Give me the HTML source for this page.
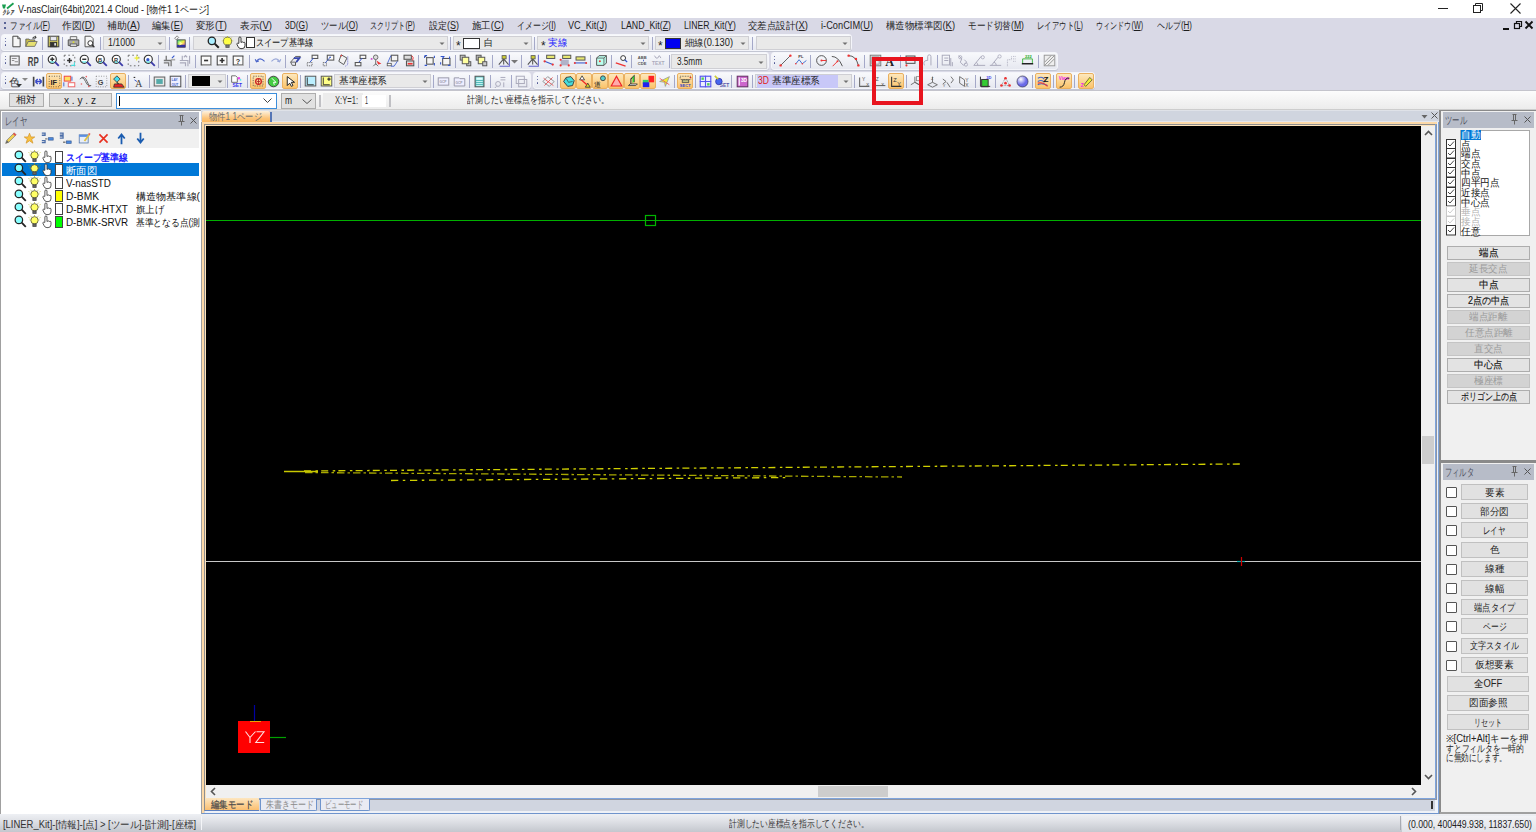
<!DOCTYPE html>
<html><head><meta charset="utf-8"><style>*{box-sizing:border-box;margin:0;padding:0}
html,body{width:1536px;height:832px;overflow:hidden;background:#d9d9e6;font-family:"Liberation Sans",sans-serif;font-size:10px;color:#000}
.a{position:absolute;display:block}
.t{white-space:nowrap;transform-origin:0 50%}
svg.a{overflow:visible}
</style></head><body>
<div class="a" style="left:0px;top:0px;width:1536px;height:18px;background:#fff"></div>
<svg class="a" style="left:0px;top:0px;" width="16" height="17" viewBox="0 0 16 17"><path d="M2 4.5h4l-1 4h-2z" fill="#1a9e50"/><path d="M7 8.5L13.5 3.2" stroke="#1a9e50" stroke-width="1.8"/><text x="1.5" y="15" font-size="7" fill="#555" font-weight="bold" font-family="Liberation Sans" textLength="12" lengthAdjust="spacingAndGlyphs" style="font-style:italic">ｸﾚｱ</text></svg>
<span id="t1" class="a t" style="transform:scaleX(0.900);left:18px;top:2.5px;height:14px;line-height:14px;font-size:10px;color:#1a1a1a;">V-nasClair(64bit)2021.4 Cloud - [物件1 1ページ]</span>
<div class="a" style="left:1438px;top:8px;width:10px;height:1px;background:#222"></div>
<svg class="a" style="left:1473px;top:3px;" width="11" height="11" viewBox="0 0 11 11"><rect x="0.5" y="2.5" width="7" height="7" fill="none" stroke="#222"/><path d="M2.5 2.5v-2h7v7h-2" fill="none" stroke="#222"/></svg>
<svg class="a" style="left:1510px;top:3px;" width="11" height="11" viewBox="0 0 11 11"><path d="M0.5 0.5l10 10M10.5 0.5l-10 10" stroke="#222" stroke-width="1.1"/></svg>
<div class="a" style="left:0px;top:18px;width:1536px;height:72px;background:#d9d9e6"></div>
<div class="a" style="left:4px;top:22px;width:2px;height:2px;background:#5a6396"></div>
<div class="a" style="left:4px;top:27px;width:2px;height:2px;background:#5a6396"></div>
<span id="t2" class="a t" style="transform:scaleX(0.758);left:10px;top:19.0px;height:14px;line-height:14px;font-size:10px;color:#1e1e1e;">ファイル(<u>F</u>)</span>
<span id="t3" class="a t" style="transform:scaleX(0.973);left:62px;top:19.0px;height:14px;line-height:14px;font-size:10px;color:#1e1e1e;">作図(<u>D</u>)</span>
<span id="t4" class="a t" style="transform:scaleX(0.989);left:107px;top:19.0px;height:14px;line-height:14px;font-size:10px;color:#1e1e1e;">補助(<u>A</u>)</span>
<span id="t5" class="a t" style="transform:scaleX(0.929);left:152px;top:19.0px;height:14px;line-height:14px;font-size:10px;color:#1e1e1e;">編集(<u>E</u>)</span>
<span id="t6" class="a t" style="transform:scaleX(0.945);left:196px;top:19.0px;height:14px;line-height:14px;font-size:10px;color:#1e1e1e;">変形(<u>T</u>)</span>
<span id="t7" class="a t" style="transform:scaleX(0.959);left:240px;top:19.0px;height:14px;line-height:14px;font-size:10px;color:#1e1e1e;">表示(<u>V</u>)</span>
<span id="t8" class="a t" style="transform:scaleX(0.844);left:285px;top:19.0px;height:14px;line-height:14px;font-size:10px;color:#1e1e1e;">3D(<u>G</u>)</span>
<span id="t9" class="a t" style="transform:scaleX(0.832);left:321px;top:19.0px;height:14px;line-height:14px;font-size:10px;color:#1e1e1e;">ツール(<u>O</u>)</span>
<span id="t10" class="a t" style="transform:scaleX(0.710);left:370px;top:19.0px;height:14px;line-height:14px;font-size:10px;color:#1e1e1e;">スクリプト(<u>P</u>)</span>
<span id="t11" class="a t" style="transform:scaleX(0.899);left:429px;top:19.0px;height:14px;line-height:14px;font-size:10px;color:#1e1e1e;">設定(<u>S</u>)</span>
<span id="t12" class="a t" style="transform:scaleX(0.943);left:472px;top:19.0px;height:14px;line-height:14px;font-size:10px;color:#1e1e1e;">施工(<u>C</u>)</span>
<span id="t13" class="a t" style="transform:scaleX(0.788);left:517px;top:19.0px;height:14px;line-height:14px;font-size:10px;color:#1e1e1e;">イメージ(<u>I</u>)</span>
<span id="t14" class="a t" style="transform:scaleX(0.911);left:568px;top:19.0px;height:14px;line-height:14px;font-size:10px;color:#1e1e1e;">VC_Kit(<u>J</u>)</span>
<span id="t15" class="a t" style="transform:scaleX(0.882);left:621px;top:19.0px;height:14px;line-height:14px;font-size:10px;color:#1e1e1e;">LAND_Kit(<u>Z</u>)</span>
<span id="t16" class="a t" style="transform:scaleX(0.866);left:684px;top:19.0px;height:14px;line-height:14px;font-size:10px;color:#1e1e1e;">LINER_Kit(<u>Y</u>)</span>
<span id="t17" class="a t" style="transform:scaleX(0.947);left:748px;top:19.0px;height:14px;line-height:14px;font-size:10px;color:#1e1e1e;">交差点設計(<u>X</u>)</span>
<span id="t18" class="a t" style="transform:scaleX(0.926);left:821px;top:19.0px;height:14px;line-height:14px;font-size:10px;color:#1e1e1e;">i-ConCIM(<u>U</u>)</span>
<span id="t19" class="a t" style="transform:scaleX(0.941);left:886px;top:19.0px;height:14px;line-height:14px;font-size:10px;color:#1e1e1e;">構造物標準図(<u>K</u>)</span>
<span id="t20" class="a t" style="transform:scaleX(0.861);left:968px;top:19.0px;height:14px;line-height:14px;font-size:10px;color:#1e1e1e;">モード切替(<u>M</u>)</span>
<span id="t21" class="a t" style="transform:scaleX(0.739);left:1037px;top:19.0px;height:14px;line-height:14px;font-size:10px;color:#1e1e1e;">レイアウト(<u>L</u>)</span>
<span id="t22" class="a t" style="transform:scaleX(0.711);left:1096px;top:19.0px;height:14px;line-height:14px;font-size:10px;color:#1e1e1e;">ウィンドウ(<u>W</u>)</span>
<span id="t23" class="a t" style="transform:scaleX(0.797);left:1157px;top:19.0px;height:14px;line-height:14px;font-size:10px;color:#1e1e1e;">ヘルプ(<u>H</u>)</span>
<div class="a" style="left:1503px;top:28px;width:6px;height:2px;background:#111"></div>
<svg class="a" style="left:1514px;top:21px;" width="8" height="8" viewBox="0 0 8 8"><rect x="0.5" y="2.5" width="5" height="5" fill="none" stroke="#111" stroke-width="1.2"/><path d="M2.5 2.5v-2h5v5h-2" fill="none" stroke="#111" stroke-width="1.2"/></svg>
<svg class="a" style="left:1525px;top:21px;" width="8" height="8" viewBox="0 0 8 8"><path d="M0.5 0.5l7 7M7.5 0.5l-7 7" stroke="#111" stroke-width="1.8"/></svg>
<div class="a" style="left:1px;top:34px;width:851px;height:17px;border-radius:3px;background:linear-gradient(#f8f9fc,#e6e8f0);border:1px solid #f4f5fa;box-shadow:0 1px 0 #c3c6d3"></div>
<div class="a" style="left:1px;top:52px;width:768px;height:18px;border-radius:3px;background:linear-gradient(#f8f9fc,#e6e8f0);border:1px solid #f4f5fa;box-shadow:0 1px 0 #c3c6d3"></div>
<div class="a" style="left:771px;top:52px;width:287px;height:18px;border-radius:3px;background:linear-gradient(#f8f9fc,#e6e8f0);border:1px solid #f4f5fa;box-shadow:0 1px 0 #c3c6d3"></div>
<div class="a" style="left:1px;top:72px;width:530px;height:17px;border-radius:3px;background:linear-gradient(#f8f9fc,#e6e8f0);border:1px solid #f4f5fa;box-shadow:0 1px 0 #c3c6d3"></div>
<div class="a" style="left:533px;top:72px;width:562px;height:17px;border-radius:3px;background:linear-gradient(#f8f9fc,#e6e8f0);border:1px solid #f4f5fa;box-shadow:0 1px 0 #c3c6d3"></div>
<div class="a" style="left:4.5px;top:37.5px;width:1.6px;height:1.6px;background:#4a5290;border-radius:1px"></div>
<div class="a" style="left:4.5px;top:40.9px;width:1.6px;height:1.6px;background:#4a5290;border-radius:1px"></div>
<div class="a" style="left:4.5px;top:44.3px;width:1.6px;height:1.6px;background:#4a5290;border-radius:1px"></div>
<div class="a" style="left:4.5px;top:55.5px;width:1.6px;height:1.6px;background:#4a5290;border-radius:1px"></div>
<div class="a" style="left:4.5px;top:58.9px;width:1.6px;height:1.6px;background:#4a5290;border-radius:1px"></div>
<div class="a" style="left:4.5px;top:62.3px;width:1.6px;height:1.6px;background:#4a5290;border-radius:1px"></div>
<div class="a" style="left:4.5px;top:75.5px;width:1.6px;height:1.6px;background:#4a5290;border-radius:1px"></div>
<div class="a" style="left:4.5px;top:78.9px;width:1.6px;height:1.6px;background:#4a5290;border-radius:1px"></div>
<div class="a" style="left:4.5px;top:82.3px;width:1.6px;height:1.6px;background:#4a5290;border-radius:1px"></div>
<div class="a" style="left:773.5px;top:55.5px;width:1.6px;height:1.6px;background:#4a5290;border-radius:1px"></div>
<div class="a" style="left:773.5px;top:58.9px;width:1.6px;height:1.6px;background:#4a5290;border-radius:1px"></div>
<div class="a" style="left:773.5px;top:62.3px;width:1.6px;height:1.6px;background:#4a5290;border-radius:1px"></div>
<div class="a" style="left:536.5px;top:75.5px;width:1.6px;height:1.6px;background:#4a5290;border-radius:1px"></div>
<div class="a" style="left:536.5px;top:78.9px;width:1.6px;height:1.6px;background:#4a5290;border-radius:1px"></div>
<div class="a" style="left:536.5px;top:82.3px;width:1.6px;height:1.6px;background:#4a5290;border-radius:1px"></div>
<div class="a" style="left:42px;top:37px;width:1.2px;height:13px;background:#a4a8c8"></div>
<div class="a" style="left:62px;top:37px;width:1.2px;height:13px;background:#a4a8c8"></div>
<div class="a" style="left:100px;top:37px;width:1.2px;height:13px;background:#a4a8c8"></div>
<div class="a" style="left:169px;top:37px;width:1.2px;height:13px;background:#a4a8c8"></div>
<div class="a" style="left:189px;top:37px;width:1.2px;height:13px;background:#a4a8c8"></div>
<div class="a" style="left:450px;top:37px;width:1.2px;height:13px;background:#a4a8c8"></div>
<div class="a" style="left:534px;top:37px;width:1.2px;height:13px;background:#a4a8c8"></div>
<div class="a" style="left:652px;top:37px;width:1.2px;height:13px;background:#a4a8c8"></div>
<div class="a" style="left:752px;top:37px;width:1.2px;height:13px;background:#a4a8c8"></div>
<div class="a" style="left:42px;top:55px;width:1.2px;height:13px;background:#a4a8c8"></div>
<div class="a" style="left:158px;top:55px;width:1.2px;height:13px;background:#a4a8c8"></div>
<div class="a" style="left:195px;top:55px;width:1.2px;height:13px;background:#a4a8c8"></div>
<div class="a" style="left:249px;top:55px;width:1.2px;height:13px;background:#a4a8c8"></div>
<div class="a" style="left:285px;top:55px;width:1.2px;height:13px;background:#a4a8c8"></div>
<div class="a" style="left:418px;top:55px;width:1.2px;height:13px;background:#a4a8c8"></div>
<div class="a" style="left:455px;top:55px;width:1.2px;height:13px;background:#a4a8c8"></div>
<div class="a" style="left:492px;top:55px;width:1.2px;height:13px;background:#a4a8c8"></div>
<div class="a" style="left:521px;top:55px;width:1.2px;height:13px;background:#a4a8c8"></div>
<div class="a" style="left:590px;top:55px;width:1.2px;height:13px;background:#a4a8c8"></div>
<div class="a" style="left:611px;top:55px;width:1.2px;height:13px;background:#a4a8c8"></div>
<div class="a" style="left:631px;top:55px;width:1.2px;height:13px;background:#a4a8c8"></div>
<div class="a" style="left:669px;top:55px;width:1.2px;height:13px;background:#a4a8c8"></div>
<div class="a" style="left:810px;top:55px;width:1.2px;height:13px;background:#a4a8c8"></div>
<div class="a" style="left:864px;top:55px;width:1.2px;height:13px;background:#a4a8c8"></div>
<div class="a" style="left:900px;top:55px;width:1.2px;height:13px;background:#a4a8c8"></div>
<div class="a" style="left:937px;top:55px;width:1.2px;height:13px;background:#a4a8c8"></div>
<div class="a" style="left:1038px;top:55px;width:1.2px;height:13px;background:#a4a8c8"></div>
<div class="a" style="left:128px;top:75px;width:1.2px;height:13px;background:#a4a8c8"></div>
<div class="a" style="left:149px;top:75px;width:1.2px;height:13px;background:#a4a8c8"></div>
<div class="a" style="left:185px;top:75px;width:1.2px;height:13px;background:#a4a8c8"></div>
<div class="a" style="left:227px;top:75px;width:1.2px;height:13px;background:#a4a8c8"></div>
<div class="a" style="left:247px;top:75px;width:1.2px;height:13px;background:#a4a8c8"></div>
<div class="a" style="left:300px;top:75px;width:1.2px;height:13px;background:#a4a8c8"></div>
<div class="a" style="left:433px;top:75px;width:1.2px;height:13px;background:#a4a8c8"></div>
<div class="a" style="left:469px;top:75px;width:1.2px;height:13px;background:#a4a8c8"></div>
<div class="a" style="left:490px;top:75px;width:1.2px;height:13px;background:#a4a8c8"></div>
<div class="a" style="left:511px;top:75px;width:1.2px;height:13px;background:#a4a8c8"></div>
<div class="a" style="left:557px;top:75px;width:1.2px;height:13px;background:#a4a8c8"></div>
<div class="a" style="left:674px;top:75px;width:1.2px;height:13px;background:#a4a8c8"></div>
<div class="a" style="left:695px;top:75px;width:1.2px;height:13px;background:#a4a8c8"></div>
<div class="a" style="left:731px;top:75px;width:1.2px;height:13px;background:#a4a8c8"></div>
<div class="a" style="left:752px;top:75px;width:1.2px;height:13px;background:#a4a8c8"></div>
<div class="a" style="left:854px;top:75px;width:1.2px;height:13px;background:#a4a8c8"></div>
<div class="a" style="left:906px;top:75px;width:1.2px;height:13px;background:#a4a8c8"></div>
<div class="a" style="left:975px;top:75px;width:1.2px;height:13px;background:#a4a8c8"></div>
<div class="a" style="left:995px;top:75px;width:1.2px;height:13px;background:#a4a8c8"></div>
<div class="a" style="left:1032px;top:75px;width:1.2px;height:13px;background:#a4a8c8"></div>
<div class="a" style="left:1053px;top:75px;width:1.2px;height:13px;background:#a4a8c8"></div>
<div class="a" style="left:1074px;top:75px;width:1.2px;height:13px;background:#a4a8c8"></div>
<div class="a" style="left:103px;top:36px;width:63px;height:14px;background:#e9e9e9;border:1px solid #cfcfd4"></div>
<svg class="a" style="left:157px;top:42.0px;" width="6" height="4" viewBox="0 0 6 4"><path d="M0.5 0.5h5l-2.5 2.5z" fill="#707070"/></svg>
<span id="t24" class="a t" style="transform:scaleX(0.883);left:108px;top:36.0px;height:14px;line-height:14px;font-size:10px;color:#222;">1/1000</span>
<div class="a" style="left:193px;top:36px;width:255px;height:14px;background:#e9e9e9;border:1px solid #cfcfd4"></div>
<svg class="a" style="left:439px;top:42.0px;" width="6" height="4" viewBox="0 0 6 4"><path d="M0.5 0.5h5l-2.5 2.5z" fill="#707070"/></svg>
<div class="a" style="left:453px;top:36px;width:79px;height:14px;background:#e9e9e9;border:1px solid #cfcfd4"></div>
<svg class="a" style="left:523px;top:42.0px;" width="6" height="4" viewBox="0 0 6 4"><path d="M0.5 0.5h5l-2.5 2.5z" fill="#707070"/></svg>
<span id="t25" class="a t" style="left:456px;top:38.5px;height:14px;line-height:14px;font-size:12px;color:#222;">*</span>
<div class="a" style="left:463px;top:38px;width:17px;height:11px;background:#fff;border:1px solid #333"></div>
<span id="t26" class="a t" style="transform:scaleX(0.900);left:484px;top:36.0px;height:14px;line-height:14px;font-size:10px;color:#222;">白</span>
<div class="a" style="left:537px;top:36px;width:112px;height:14px;background:#e9e9e9;border:1px solid #cfcfd4"></div>
<svg class="a" style="left:640px;top:42.0px;" width="6" height="4" viewBox="0 0 6 4"><path d="M0.5 0.5h5l-2.5 2.5z" fill="#707070"/></svg>
<span id="t27" class="a t" style="left:541px;top:38.5px;height:14px;line-height:14px;font-size:12px;color:#222;">*</span>
<span id="t28" class="a t" style="transform:scaleX(0.950);left:548px;top:36.0px;height:14px;line-height:14px;font-size:10px;color:#2020ff;">実線</span>
<div class="a" style="left:655px;top:36px;width:94px;height:14px;background:#e9e9e9;border:1px solid #cfcfd4"></div>
<svg class="a" style="left:740px;top:42.0px;" width="6" height="4" viewBox="0 0 6 4"><path d="M0.5 0.5h5l-2.5 2.5z" fill="#707070"/></svg>
<span id="t29" class="a t" style="left:658px;top:38.5px;height:14px;line-height:14px;font-size:12px;color:#222;">*</span>
<div class="a" style="left:665px;top:38px;width:16px;height:11px;background:#0000f0;border:1px solid #333"></div>
<span id="t30" class="a t" style="transform:scaleX(0.929);left:685px;top:36.0px;height:14px;line-height:14px;font-size:10px;color:#222;">細線(0.130)</span>
<div class="a" style="left:756px;top:36px;width:95px;height:14px;background:#e9e9e9;border:1px solid #cfcfd4"></div>
<svg class="a" style="left:842px;top:42.0px;" width="6" height="4" viewBox="0 0 6 4"><path d="M0.5 0.5h5l-2.5 2.5z" fill="#707070"/></svg>
<span id="t31" class="a t" style="transform:scaleX(0.814);left:256px;top:35.5px;height:14px;line-height:14px;font-size:10px;color:#111;">スイープ基準線</span>
<div class="a" style="left:671px;top:54px;width:96px;height:15px;background:#e9e9e9;border:1px solid #cfcfd4"></div>
<svg class="a" style="left:758px;top:60.5px;" width="6" height="4" viewBox="0 0 6 4"><path d="M0.5 0.5h5l-2.5 2.5z" fill="#707070"/></svg>
<span id="t32" class="a t" style="transform:scaleX(0.818);left:677px;top:55.0px;height:14px;line-height:14px;font-size:10px;color:#222;">3.5mm</span>
<div class="a" style="left:188px;top:74px;width:38px;height:14px;background:#e9e9e9;border:1px solid #cfcfd4"></div>
<svg class="a" style="left:217px;top:80.0px;" width="6" height="4" viewBox="0 0 6 4"><path d="M0.5 0.5h5l-2.5 2.5z" fill="#707070"/></svg>
<div class="a" style="left:192px;top:76px;width:18px;height:10px;background:#000"></div>
<div class="a" style="left:334px;top:74px;width:97px;height:14px;background:#e9e9e9;border:1px solid #cfcfd4"></div>
<svg class="a" style="left:422px;top:80.0px;" width="6" height="4" viewBox="0 0 6 4"><path d="M0.5 0.5h5l-2.5 2.5z" fill="#707070"/></svg>
<span id="t33" class="a t" style="transform:scaleX(0.960);left:339px;top:74.0px;height:14px;line-height:14px;font-size:10px;color:#222;">基準座標系</span>
<div class="a" style="left:755px;top:74px;width:97px;height:14px;background:#e9e9e9;border:1px solid #cfcfd4"></div>
<svg class="a" style="left:843px;top:80.0px;" width="6" height="4" viewBox="0 0 6 4"><path d="M0.5 0.5h5l-2.5 2.5z" fill="#707070"/></svg>
<div class="a" style="left:757px;top:75px;width:81px;height:13px;background:#c8c8f8"></div>
<span id="t34" class="a t" style="transform:scaleX(0.860);left:758px;top:74.0px;height:14px;line-height:14px;font-size:10px;color:#e02020;">3D</span>
<span id="t35" class="a t" style="transform:scaleX(0.960);left:772px;top:74.0px;height:14px;line-height:14px;font-size:10px;color:#222;">基準座標系</span>
<div class="a" style="left:0px;top:90px;width:1536px;height:19px;background:linear-gradient(#fdfdfd,#ececec)"></div>
<div class="a" style="left:0px;top:90px;width:1536px;height:1px;background:#c4c4cc"></div>
<div class="a" style="left:0px;top:109px;width:1536px;height:1px;background:#cdcdcd"></div>
<div class="a" style="left:9px;top:93px;width:35px;height:14px;background:#e1e1e1;border:1px solid #adadad"></div>
<span id="t36" class="a t" style="transform:scaleX(1.000);left:16px;top:92.8px;height:14px;line-height:14px;font-size:10px;color:#222;">相対</span>
<div class="a" style="left:49px;top:93px;width:63px;height:14px;background:#e1e1e1;border:1px solid #adadad"></div>
<span id="t37" class="a t" style="transform:scaleX(1.010);left:64px;top:93.5px;height:14px;line-height:14px;font-size:10px;color:#222;">x . y . z</span>
<div class="a" style="left:116px;top:93px;width:161px;height:16px;background:#fff;border:1px solid #3d8edb"></div>
<div class="a" style="left:119px;top:96px;width:1px;height:10px;background:#000"></div>
<svg class="a" style="left:263px;top:98px;" width="9" height="5" viewBox="0 0 9 5"><path d="M0.5 0.5l4 4 4-4" stroke="#444" fill="none"/></svg>
<div class="a" style="left:281px;top:93px;width:35px;height:16px;background:#e1e1e1;border:1px solid #adadad"></div>
<span id="t38" class="a t" style="transform:scaleX(0.839);left:284.5px;top:94.0px;height:14px;line-height:14px;font-size:10px;color:#222;">m</span>
<svg class="a" style="left:302px;top:99px;" width="10" height="5" viewBox="0 0 10 5"><path d="M0.5 0.5l4.5 4 4.5-4" stroke="#555" fill="none" stroke-width="1"/></svg>
<div class="a" style="left:319px;top:95px;width:2px;height:12px;background:#c0c0c4"></div>
<div class="a" style="left:389px;top:95px;width:2px;height:12px;background:#c0c0c4"></div>
<div class="a" style="left:323px;top:93px;width:40px;height:15px;background:#ececec"></div>
<div class="a" style="left:362px;top:95px;width:24px;height:12px;background:#fff"></div>
<span id="t39" class="a t" style="transform:scaleX(0.759);left:335px;top:94.0px;height:14px;line-height:14px;font-size:10px;color:#333;">X:Y=1:</span>
<span id="t40" class="a t" style="transform:scaleX(0.539);left:365px;top:94.0px;height:14px;line-height:14px;font-size:10px;color:#333;">1</span>
<span id="t41" class="a t" style="transform:scaleX(0.789);left:467px;top:92.6px;height:14px;line-height:14px;font-size:10px;color:#222;">計測したい座標点を指示してください。</span>
<div class="a" style="left:0px;top:110px;width:1536px;height:705px;background:#d0d4de"></div>
<div class="a" style="left:0px;top:110px;width:202px;height:705px;background:#fff;border:1px solid #a0a0a0"></div>
<div class="a" style="left:2px;top:112px;width:197px;height:17px;background:#b7bcc8"></div>
<span id="t42" class="a t" style="transform:scaleX(0.667);left:4.5px;top:113.5px;height:14px;line-height:14px;font-size:10.5px;color:#4f535f;">レイヤ</span>
<svg class="a" style="left:178px;top:115px;" width="7" height="11" viewBox="0 0 7 11"><path d="M1.5 0.5h4M2.5 0.5v6M4.5 0.5v6M0.5 6.5h6M3.5 6.5v4" stroke="#666" fill="none"/></svg>
<svg class="a" style="left:190px;top:117px;" width="7" height="7" viewBox="0 0 7 7"><path d="M0.5 0.5l6 6M6.5 0.5l-6 6" stroke="#555" stroke-width="1"/></svg>
<div class="a" style="left:2px;top:129px;width:197px;height:19px;background:#f0f0f0"></div>
<div class="a" style="left:2px;top:163px;width:197px;height:13px;background:#0078d7"></div>
<div class="a" style="left:55px;top:151px;width:8px;height:12px;background:#fff;border:1px solid #444"></div>
<span id="t43" class="a t" style="transform:scaleX(0.886);left:66px;top:150.5px;height:14px;line-height:14px;font-size:10px;color:#2222ff;font-weight:bold;">スイープ基準線</span>
<div class="a" style="left:55px;top:164px;width:8px;height:12px;background:#fff;border:1px solid #444"></div>
<span id="t44" class="a t" style="transform:scaleX(1.033);left:66px;top:163.5px;height:14px;line-height:14px;font-size:10px;color:#fff;">断面図</span>
<div class="a" style="left:55px;top:177px;width:8px;height:12px;background:#fff;border:1px solid #444"></div>
<span id="t45" class="a t" style="transform:scaleX(0.987);left:66px;top:176.5px;height:14px;line-height:14px;font-size:10px;color:#111;">V-nasSTD</span>
<div class="a" style="left:55px;top:190px;width:8px;height:12px;background:#ffff00;border:1px solid #444"></div>
<span id="t46" class="a t" style="transform:scaleX(1.024);left:66px;top:189.5px;height:14px;line-height:14px;font-size:10px;color:#111;">D-BMK</span>
<span id="t47" class="a t" style="transform:scaleX(1.010);left:136px;top:189.5px;height:14px;line-height:14px;font-size:10px;color:#111;">構造物基準線(</span>
<div class="a" style="left:55px;top:203px;width:8px;height:12px;background:#fff;border:1px solid #444"></div>
<span id="t48" class="a t" style="transform:scaleX(1.005);left:66px;top:202.5px;height:14px;line-height:14px;font-size:10px;color:#111;">D-BMK-HTXT</span>
<span id="t49" class="a t" style="transform:scaleX(0.933);left:136px;top:202.5px;height:14px;line-height:14px;font-size:10px;color:#111;">旗上げ</span>
<div class="a" style="left:55px;top:216px;width:8px;height:12px;background:#00ff00;border:1px solid #444"></div>
<span id="t50" class="a t" style="transform:scaleX(0.982);left:66px;top:215.5px;height:14px;line-height:14px;font-size:10px;color:#111;">D-BMK-SRVR</span>
<span id="t51" class="a t" style="transform:scaleX(0.873);left:136px;top:215.5px;height:14px;line-height:14px;font-size:10px;color:#111;">基準となる点(測</span>
<div class="a" style="left:199px;top:148px;width:1px;height:13px;background:#fff"></div>
<div class="a" style="left:201px;top:110px;width:1239px;height:12px;background:#d0d5df"></div>
<div class="a" style="left:201px;top:110px;width:1239px;height:1px;background:#dfe2e8"></div>
<div class="a" style="left:201px;top:121px;width:1239px;height:1px;background:#e3e6ee"></div>
<div class="a" style="left:202px;top:111px;width:68px;height:12px;background:linear-gradient(#fdf1de,#fcc47a 60%,#fbb55a);border-radius:2px 2px 0 0"></div>
<span id="t52" class="a t" style="transform:scaleX(0.829);left:209px;top:109.6px;height:14px;line-height:14px;font-size:10px;color:#707070;">物件1 1ページ</span>
<div class="a" style="left:270px;top:112px;width:1.5px;height:10px;background:#5575b5"></div>
<svg class="a" style="left:1421px;top:115px;" width="7" height="4" viewBox="0 0 7 4"><path d="M0.5 0h6l-3 3.5z" fill="#666"/></svg>
<svg class="a" style="left:1431px;top:112px;" width="7" height="7" viewBox="0 0 7 7"><path d="M0.5 0.5l6 6M6.5 0.5l-6 6" stroke="#555" stroke-width="1"/></svg>
<div class="a" style="left:202px;top:122px;width:1235px;height:2px;background:#fcd9a8"></div>
<div class="a" style="left:202px;top:122px;width:2px;height:691px;background:#fcd9a8"></div>
<div class="a" style="left:1435px;top:124px;width:3px;height:690px;background:#eef3fb"></div>
<div class="a" style="left:204px;top:124px;width:1232px;height:1px;background:#8f8f8f"></div>
<div class="a" style="left:204px;top:124px;width:1px;height:687px;background:#8f8f8f"></div>
<div class="a" style="left:205px;top:125px;width:1230px;height:1px;background:#fde3bc"></div>
<div class="a" style="left:205px;top:125px;width:1px;height:674px;background:#fde3bc"></div>
<div class="a" style="left:206px;top:126px;width:1215px;height:659px;background:#000"></div>
<div class="a" style="left:1421px;top:126px;width:14px;height:659px;background:#f0f0f0"></div>
<div class="a" style="left:1422px;top:436px;width:12px;height:28px;background:#cdcdcd"></div>
<svg class="a" style="left:1424px;top:130px;" width="9" height="6" viewBox="0 0 9 6"><path d="M1 5l3.5-3.5 3.5 3.5" stroke="#555" stroke-width="1.6" fill="none"/></svg>
<svg class="a" style="left:1424px;top:774px;" width="9" height="6" viewBox="0 0 9 6"><path d="M1 1l3.5 3.5 3.5-3.5" stroke="#555" stroke-width="1.6" fill="none"/></svg>
<div class="a" style="left:206px;top:785px;width:1229px;height:13px;background:#f0f0f0"></div>
<div class="a" style="left:818px;top:786px;width:70px;height:11px;background:#cdcdcd"></div>
<svg class="a" style="left:210px;top:787px;" width="6" height="9" viewBox="0 0 6 9"><path d="M5 1l-3.5 3.5 3.5 3.5" stroke="#555" stroke-width="1.6" fill="none"/></svg>
<svg class="a" style="left:1411px;top:787px;" width="6" height="9" viewBox="0 0 6 9"><path d="M1 1l3.5 3.5-3.5 3.5" stroke="#555" stroke-width="1.6" fill="none"/></svg>
<div class="a" style="left:1435px;top:124px;width:1px;height:675px;background:#7ea4dc"></div>
<div class="a" style="left:205px;top:798px;width:1231px;height:1px;background:#7ea4dc"></div>
<div class="a" style="left:1436px;top:124px;width:1px;height:676px;background:#8f96a4"></div>
<div class="a" style="left:205px;top:799px;width:1232px;height:1px;background:#8f96a4"></div>
<div class="a" style="left:1437px;top:122px;width:1px;height:691px;background:#eef3fb"></div>
<div class="a" style="left:1438px;top:122px;width:1px;height:692px;background:#7ea4dc"></div>
<div class="a" style="left:202px;top:813px;width:1237px;height:1px;background:#6f94cc"></div>
<div class="a" style="left:1439px;top:110px;width:1px;height:705px;background:#8a8a8a"></div>
<div class="a" style="left:205px;top:800px;width:1230px;height:12px;background:#d0d5e0"></div>
<div class="a" style="left:205px;top:811px;width:1230px;height:2px;background:#eef1f7"></div>
<div class="a" style="left:205px;top:798px;width:54px;height:13px;background:linear-gradient(#fde6c0,#fbbf70);border-bottom:1px solid #5b7fc0"></div>
<span id="t53" class="a t" style="transform:scaleX(0.840);left:211px;top:797.5px;height:14px;line-height:14px;font-size:10px;color:#4a4a4a;-webkit-text-stroke:0.2px #4a4a4a">編集モード</span>
<div class="a" style="left:260px;top:799px;width:57px;height:12px;background:#e9ebf3;border:1px solid #6f94cc;border-top:none;border-radius:0 0 2px 1px"></div>
<span id="t54" class="a t" style="transform:scaleX(0.800);left:266px;top:797.5px;height:14px;line-height:14px;font-size:10px;color:#8a8a8a;">朱書きモード</span>
<div class="a" style="left:320px;top:799px;width:50px;height:12px;background:#e9ebf3;border:1px solid #6f94cc;border-top:none;border-radius:0 0 2px 1px"></div>
<span id="t55" class="a t" style="transform:scaleX(0.633);left:325px;top:797.5px;height:14px;line-height:14px;font-size:10px;color:#8a8a8a;">ビューモード</span>
<div class="a" style="left:1431px;top:801px;width:1.5px;height:8px;background:#333"></div>
<svg class="a" style="left:206px;top:126px;" width="1215" height="659" viewBox="0 0 1215 659"><line x1="0" y1="94.5" x2="1215" y2="94.5" stroke="#00b000" stroke-width="1.2"/><rect x="439.5" y="89.5" width="10" height="10" fill="none" stroke="#00b400" stroke-width="1.2"/><line x1="0" y1="435.5" x2="1215" y2="435.5" stroke="#c8c8c8" stroke-width="1"/><line x1="1031" y1="435.5" x2="1039" y2="435.5" stroke="#10b0b0" stroke-width="1.2"/><line x1="1035.5" y1="431" x2="1035.5" y2="440" stroke="#d00000" stroke-width="1.2"/><line x1="98" y1="345" x2="1035" y2="338" stroke="#d0d000" stroke-width="1.3" stroke-dasharray="7 4.5 2.5 3.2"/><line x1="99" y1="346.5" x2="696" y2="351" stroke="#a8a800" stroke-width="1.3" stroke-dasharray="7.5 3 2.5 3"/><line x1="185" y1="354.5" x2="584" y2="351.5" stroke="#d0d000" stroke-width="1.3" stroke-dasharray="7.3 4.5 2.5 4.7"/><line x1="78" y1="345.5" x2="112" y2="345.5" stroke="#c8c800" stroke-width="1.3"/><rect x="32" y="595" width="32" height="32" fill="#ff0000"/><line x1="48.5" y1="579" x2="48.5" y2="595" stroke="#0000a0" stroke-width="1.2"/><line x1="64" y1="611.5" x2="80" y2="611.5" stroke="#00a000" stroke-width="1.2"/><line x1="44" y1="595.5" x2="55" y2="595.5" stroke="#f0a000" stroke-width="1"/><path d="M39.5 605.5L44 611.5L49.5 605.5M44 611.5V617M50.5 605.8H58L49.8 616.5H58.2" stroke="#ffe0e0" stroke-width="1.1" fill="none"/></svg>
<div class="a" style="left:1440px;top:110px;width:96px;height:705px;background:#8a8a8a"></div>
<div class="a" style="left:1441px;top:111px;width:95px;height:703px;background:#f0f0f0"></div>
<div class="a" style="left:1443px;top:112px;width:91px;height:16px;background:#b7bcc8"></div>
<span id="t56" class="a t" style="transform:scaleX(0.667);left:1444.5px;top:113.0px;height:14px;line-height:14px;font-size:10.5px;color:#4f535f;">ツール</span>
<svg class="a" style="left:1511px;top:114px;" width="7" height="11" viewBox="0 0 7 11"><path d="M1.5 0.5h4M2.5 0.5v6M4.5 0.5v6M0.5 6.5h6M3.5 6.5v4" stroke="#666" fill="none"/></svg>
<svg class="a" style="left:1524px;top:116px;" width="7" height="7" viewBox="0 0 7 7"><path d="M0.5 0.5l6 6M6.5 0.5l-6 6" stroke="#555" stroke-width="1"/></svg>
<div class="a" style="left:1460px;top:130px;width:70px;height:106px;background:#fff;border:1px solid #a8a8a8"></div>
<div class="a" style="left:1461px;top:130px;width:20px;height:10px;background:#0078d7"></div>
<span id="t57" class="a t" style="transform:scaleX(0.960);left:1461px;top:128.0px;height:14px;line-height:14px;font-size:9.6px;color:#fff;">自動</span>
<span id="t58" class="a t" style="transform:scaleX(0.960);left:1461px;top:137.65px;height:14px;line-height:14px;font-size:9.6px;color:#111;">点</span>
<span id="t59" class="a t" style="transform:scaleX(0.960);left:1461px;top:147.3px;height:14px;line-height:14px;font-size:9.6px;color:#111;">端点</span>
<span id="t60" class="a t" style="transform:scaleX(0.960);left:1461px;top:156.95px;height:14px;line-height:14px;font-size:9.6px;color:#111;">交点</span>
<span id="t61" class="a t" style="transform:scaleX(0.960);left:1461px;top:166.6px;height:14px;line-height:14px;font-size:9.6px;color:#111;">中点</span>
<span id="t62" class="a t" style="transform:scaleX(0.960);left:1461px;top:176.25px;height:14px;line-height:14px;font-size:9.6px;color:#111;">四半円点</span>
<span id="t63" class="a t" style="transform:scaleX(0.960);left:1461px;top:185.9px;height:14px;line-height:14px;font-size:9.6px;color:#111;">近接点</span>
<span id="t64" class="a t" style="transform:scaleX(0.960);left:1461px;top:195.55px;height:14px;line-height:14px;font-size:9.6px;color:#111;">中心点</span>
<span id="t65" class="a t" style="transform:scaleX(0.960);left:1461px;top:205.2px;height:14px;line-height:14px;font-size:9.6px;color:#b0b0b0;">垂点</span>
<span id="t66" class="a t" style="transform:scaleX(0.960);left:1461px;top:214.85000000000002px;height:14px;line-height:14px;font-size:9.6px;color:#b0b0b0;">接点</span>
<span id="t67" class="a t" style="transform:scaleX(0.960);left:1461px;top:224.5px;height:14px;line-height:14px;font-size:9.6px;color:#111;">任意</span>
<svg class="a" style="left:1446px;top:139px;" width="10" height="10" viewBox="0 0 10 10"><rect x="0.5" y="0.5" width="9" height="9.5" fill="#fff" stroke="#333"/><path d="M2 5l2 2 4-4.5" stroke="#333" fill="none" stroke-width="0.9"/></svg>
<svg class="a" style="left:1446px;top:148px;" width="10" height="10" viewBox="0 0 10 10"><rect x="0.5" y="0.5" width="9" height="9.5" fill="#fff" stroke="#333"/><path d="M2 5l2 2 4-4.5" stroke="#333" fill="none" stroke-width="0.9"/></svg>
<svg class="a" style="left:1446px;top:158px;" width="10" height="10" viewBox="0 0 10 10"><rect x="0.5" y="0.5" width="9" height="9.5" fill="#fff" stroke="#333"/><path d="M2 5l2 2 4-4.5" stroke="#333" fill="none" stroke-width="0.9"/></svg>
<svg class="a" style="left:1446px;top:167px;" width="10" height="10" viewBox="0 0 10 10"><rect x="0.5" y="0.5" width="9" height="9.5" fill="#fff" stroke="#333"/><path d="M2 5l2 2 4-4.5" stroke="#333" fill="none" stroke-width="0.9"/></svg>
<svg class="a" style="left:1446px;top:177px;" width="10" height="10" viewBox="0 0 10 10"><rect x="0.5" y="0.5" width="9" height="9.5" fill="#fff" stroke="#333"/><path d="M2 5l2 2 4-4.5" stroke="#333" fill="none" stroke-width="0.9"/></svg>
<svg class="a" style="left:1446px;top:187px;" width="10" height="10" viewBox="0 0 10 10"><rect x="0.5" y="0.5" width="9" height="9.5" fill="#fff" stroke="#333"/><path d="M2 5l2 2 4-4.5" stroke="#333" fill="none" stroke-width="0.9"/></svg>
<svg class="a" style="left:1446px;top:196px;" width="10" height="10" viewBox="0 0 10 10"><rect x="0.5" y="0.5" width="9" height="9.5" fill="#fff" stroke="#333"/><path d="M2 5l2 2 4-4.5" stroke="#333" fill="none" stroke-width="0.9"/></svg>
<svg class="a" style="left:1446px;top:206px;" width="10" height="10" viewBox="0 0 10 10"><rect x="0.5" y="0.5" width="9" height="9.5" fill="#fff" stroke="#c8c8c8"/><path d="M2 5l2 2 4-4.5" stroke="#c8c8c8" fill="none" stroke-width="0.9"/></svg>
<svg class="a" style="left:1446px;top:216px;" width="10" height="10" viewBox="0 0 10 10"><rect x="0.5" y="0.5" width="9" height="9.5" fill="#fff" stroke="#c8c8c8"/><path d="M2 5l2 2 4-4.5" stroke="#c8c8c8" fill="none" stroke-width="0.9"/></svg>
<svg class="a" style="left:1446px;top:225px;" width="10" height="10" viewBox="0 0 10 10"><rect x="0.5" y="0.5" width="9" height="9.5" fill="#fff" stroke="#333"/><path d="M2 5l2 2 4-4.5" stroke="#333" fill="none" stroke-width="0.9"/></svg>
<div class="a" style="left:1447px;top:246px;width:83px;height:14px;background:#e3e3e3;border:1px solid #adadad"></div>
<span id="t68" class="a t" style="transform:scaleX(0.960);left:1478.9px;top:246.0px;height:14px;line-height:14px;font-size:10px;color:#111;-webkit-text-stroke:0.12px #111">端点</span>
<div class="a" style="left:1447px;top:262px;width:83px;height:14px;background:#d3d3d3;border:1px solid #c4c4c4"></div>
<span id="t69" class="a t" style="transform:scaleX(0.960);left:1469.3px;top:262.0px;height:14px;line-height:14px;font-size:10px;color:#9a9a9a;">延長交点</span>
<div class="a" style="left:1447px;top:278px;width:83px;height:14px;background:#e3e3e3;border:1px solid #adadad"></div>
<span id="t70" class="a t" style="transform:scaleX(0.960);left:1478.9px;top:278.0px;height:14px;line-height:14px;font-size:10px;color:#111;-webkit-text-stroke:0.12px #111">中点</span>
<div class="a" style="left:1447px;top:294px;width:83px;height:14px;background:#e3e3e3;border:1px solid #adadad"></div>
<span id="t71" class="a t" style="transform:scaleX(0.906);left:1467.85px;top:294.0px;height:14px;line-height:14px;font-size:10px;color:#111;-webkit-text-stroke:0.12px #111">2点の中点</span>
<div class="a" style="left:1447px;top:310px;width:83px;height:14px;background:#d3d3d3;border:1px solid #c4c4c4"></div>
<span id="t72" class="a t" style="transform:scaleX(0.960);left:1469.3px;top:310.0px;height:14px;line-height:14px;font-size:10px;color:#9a9a9a;">端点距離</span>
<div class="a" style="left:1447px;top:326px;width:83px;height:14px;background:#d3d3d3;border:1px solid #c4c4c4"></div>
<span id="t73" class="a t" style="transform:scaleX(0.960);left:1464.5px;top:326.0px;height:14px;line-height:14px;font-size:10px;color:#9a9a9a;">任意点距離</span>
<div class="a" style="left:1447px;top:342px;width:83px;height:14px;background:#d3d3d3;border:1px solid #c4c4c4"></div>
<span id="t74" class="a t" style="transform:scaleX(0.960);left:1474.1px;top:342.0px;height:14px;line-height:14px;font-size:10px;color:#9a9a9a;">直交点</span>
<div class="a" style="left:1447px;top:358px;width:83px;height:14px;background:#e3e3e3;border:1px solid #adadad"></div>
<span id="t75" class="a t" style="transform:scaleX(0.960);left:1474.1px;top:358.0px;height:14px;line-height:14px;font-size:10px;color:#111;-webkit-text-stroke:0.12px #111">中心点</span>
<div class="a" style="left:1447px;top:374px;width:83px;height:14px;background:#d3d3d3;border:1px solid #c4c4c4"></div>
<span id="t76" class="a t" style="transform:scaleX(0.960);left:1474.1px;top:374.0px;height:14px;line-height:14px;font-size:10px;color:#9a9a9a;">極座標</span>
<div class="a" style="left:1447px;top:390px;width:83px;height:14px;background:#e3e3e3;border:1px solid #adadad"></div>
<span id="t77" class="a t" style="transform:scaleX(0.800);left:1460.5px;top:390.0px;height:14px;line-height:14px;font-size:10px;color:#111;-webkit-text-stroke:0.12px #111">ポリゴン上の点</span>
<div class="a" style="left:1441px;top:460px;width:95px;height:3px;background:#8a8a8a"></div>
<div class="a" style="left:1443px;top:464px;width:91px;height:16px;background:#b7bcc8"></div>
<span id="t78" class="a t" style="transform:scaleX(0.659);left:1444.5px;top:465.0px;height:14px;line-height:14px;font-size:10.5px;color:#4f535f;">フィルタ</span>
<svg class="a" style="left:1511px;top:466px;" width="7" height="11" viewBox="0 0 7 11"><path d="M1.5 0.5h4M2.5 0.5v6M4.5 0.5v6M0.5 6.5h6M3.5 6.5v4" stroke="#666" fill="none"/></svg>
<svg class="a" style="left:1524px;top:468px;" width="7" height="7" viewBox="0 0 7 7"><path d="M0.5 0.5l6 6M6.5 0.5l-6 6" stroke="#555" stroke-width="1"/></svg>
<div class="a" style="left:1446px;top:487px;width:11px;height:11px;background:#fff;border:1px solid #555;border-radius:1px"></div>
<div class="a" style="left:1461px;top:484px;width:67px;height:16px;background:#e1e1e1;border:1px solid #c0c0c0"></div>
<span id="t79" class="a t" style="transform:scaleX(0.960);left:1484.9px;top:485.5px;height:14px;line-height:14px;font-size:10px;color:#222;">要素</span>
<div class="a" style="left:1446px;top:506px;width:11px;height:11px;background:#fff;border:1px solid #555;border-radius:1px"></div>
<div class="a" style="left:1461px;top:503px;width:67px;height:16px;background:#e1e1e1;border:1px solid #c0c0c0"></div>
<span id="t80" class="a t" style="transform:scaleX(0.960);left:1480.1px;top:504.7px;height:14px;line-height:14px;font-size:10px;color:#222;">部分図</span>
<div class="a" style="left:1446px;top:525px;width:11px;height:11px;background:#fff;border:1px solid #555;border-radius:1px"></div>
<div class="a" style="left:1461px;top:522px;width:67px;height:16px;background:#e1e1e1;border:1px solid #c0c0c0"></div>
<span id="t81" class="a t" style="transform:scaleX(0.740);left:1483.4px;top:523.9px;height:14px;line-height:14px;font-size:10px;color:#222;">レイヤ</span>
<div class="a" style="left:1446px;top:545px;width:11px;height:11px;background:#fff;border:1px solid #555;border-radius:1px"></div>
<div class="a" style="left:1461px;top:542px;width:67px;height:16px;background:#e1e1e1;border:1px solid #c0c0c0"></div>
<span id="t82" class="a t" style="transform:scaleX(0.960);left:1489.7px;top:543.1px;height:14px;line-height:14px;font-size:10px;color:#222;">色</span>
<div class="a" style="left:1446px;top:564px;width:11px;height:11px;background:#fff;border:1px solid #555;border-radius:1px"></div>
<div class="a" style="left:1461px;top:561px;width:67px;height:16px;background:#e1e1e1;border:1px solid #c0c0c0"></div>
<span id="t83" class="a t" style="transform:scaleX(0.960);left:1484.9px;top:562.3px;height:14px;line-height:14px;font-size:10px;color:#222;">線種</span>
<div class="a" style="left:1446px;top:583px;width:11px;height:11px;background:#fff;border:1px solid #555;border-radius:1px"></div>
<div class="a" style="left:1461px;top:580px;width:67px;height:16px;background:#e1e1e1;border:1px solid #c0c0c0"></div>
<span id="t84" class="a t" style="transform:scaleX(0.960);left:1484.9px;top:581.5px;height:14px;line-height:14px;font-size:10px;color:#222;">線幅</span>
<div class="a" style="left:1446px;top:602px;width:11px;height:11px;background:#fff;border:1px solid #555;border-radius:1px"></div>
<div class="a" style="left:1461px;top:599px;width:67px;height:16px;background:#e1e1e1;border:1px solid #c0c0c0"></div>
<span id="t85" class="a t" style="transform:scaleX(0.828);left:1473.8px;top:600.7px;height:14px;line-height:14px;font-size:10px;color:#222;">端点タイプ</span>
<div class="a" style="left:1446px;top:621px;width:11px;height:11px;background:#fff;border:1px solid #555;border-radius:1px"></div>
<div class="a" style="left:1461px;top:618px;width:67px;height:16px;background:#e1e1e1;border:1px solid #c0c0c0"></div>
<span id="t86" class="a t" style="transform:scaleX(0.777);left:1482.85px;top:619.9px;height:14px;line-height:14px;font-size:10px;color:#222;">ページ</span>
<div class="a" style="left:1446px;top:641px;width:11px;height:11px;background:#fff;border:1px solid #555;border-radius:1px"></div>
<div class="a" style="left:1461px;top:638px;width:67px;height:16px;background:#e1e1e1;border:1px solid #c0c0c0"></div>
<span id="t87" class="a t" style="transform:scaleX(0.813);left:1470.1px;top:639.1px;height:14px;line-height:14px;font-size:10px;color:#222;">文字スタイル</span>
<div class="a" style="left:1446px;top:660px;width:11px;height:11px;background:#fff;border:1px solid #555;border-radius:1px"></div>
<div class="a" style="left:1461px;top:657px;width:67px;height:16px;background:#e1e1e1;border:1px solid #c0c0c0"></div>
<span id="t88" class="a t" style="transform:scaleX(0.960);left:1475.3px;top:658.3px;height:14px;line-height:14px;font-size:10px;color:#222;">仮想要素</span>
<div class="a" style="left:1447px;top:676px;width:82px;height:16px;background:#e1e1e1;border:1px solid #c0c0c0"></div>
<span id="t89" class="a t" style="transform:scaleX(0.940);left:1473.9px;top:677.0px;height:14px;line-height:14px;font-size:10px;color:#222;">全OFF</span>
<div class="a" style="left:1447px;top:695px;width:82px;height:16px;background:#e1e1e1;border:1px solid #c0c0c0"></div>
<span id="t90" class="a t" style="transform:scaleX(0.960);left:1468.8px;top:696.3px;height:14px;line-height:14px;font-size:10px;color:#222;">図面参照</span>
<div class="a" style="left:1447px;top:714px;width:82px;height:16px;background:#e1e1e1;border:1px solid #c0c0c0"></div>
<span id="t91" class="a t" style="transform:scaleX(0.700);left:1474.0px;top:715.6px;height:14px;line-height:14px;font-size:10px;color:#222;">リセット</span>
<span id="t92" class="a t" style="transform:scaleX(0.947);left:1446px;top:732.0px;height:14px;line-height:14px;font-size:10px;color:#222;">※[Ctrl+Alt]キーを押</span>
<span id="t93" class="a t" style="transform:scaleX(0.780);left:1446px;top:741.5px;height:14px;line-height:14px;font-size:10px;color:#222;">すとフィルタを一時的</span>
<span id="t94" class="a t" style="transform:scaleX(0.762);left:1446px;top:751.0px;height:14px;line-height:14px;font-size:10px;color:#222;">に無効にします。</span>
<div class="a" style="left:1440px;top:812px;width:96px;height:2px;background:#a0a0a0"></div>
<div class="a" style="left:0px;top:814px;width:1536px;height:18px;background:linear-gradient(#eef0f4,#dfe1e6 40%,#c4c7ce)"></div>
<div class="a" style="left:201px;top:816px;width:1px;height:14px;background:#f4f5f8"></div>
<div class="a" style="left:1400px;top:816px;width:1px;height:14px;background:#a8abb3"></div>
<div class="a" style="left:1402px;top:816px;width:134px;height:16px;background:linear-gradient(#f2f3f6,#e1e3e8)"></div>
<span id="t95" class="a t" style="transform:scaleX(0.943);left:3px;top:817.5px;height:14px;line-height:14px;font-size:10px;color:#333;">[LINER_Kit]-[情報]-[点] &gt; [ツール]-[計測]-[座標]</span>
<span id="t96" class="a t" style="transform:scaleX(0.778);left:729px;top:817.0px;height:14px;line-height:14px;font-size:10px;color:#333;">計測したい座標点を指示してください。</span>
<span id="t97" class="a t" style="transform:scaleX(0.872);left:1408px;top:817.5px;height:14px;line-height:14px;font-size:10px;color:#222;">(0.000, 400449.938, 11837.650)</span>
<svg class="a" style="left:9.5px;top:35px" width="13" height="13" viewBox="0 0 16 16"><path d="M3.5 1.5h6l3 3v10h-9z" fill="#f6f6f6" stroke="#444" stroke-width="1.2" /><path d="M9.5 1.5v3h3" fill="none" stroke="#444" stroke-width="1" /></svg>
<svg class="a" style="left:25px;top:35px" width="13" height="13" viewBox="0 0 16 16"><path d="M1 5h4l1 1h6v2H5l-4 6z" fill="#c8c050" stroke="#555" stroke-width="1" /><path d="M4 8h11l-3 6H1z" fill="#e6e070" stroke="#666" stroke-width="1" /><path d="M9 4q2-3 5-1" fill="none" stroke="#333" stroke-width="1.2" /><path d="M13 1v3h-3" fill="none" stroke="#333" stroke-width="1" /></svg>
<svg class="a" style="left:46.5px;top:35px" width="13" height="13" viewBox="0 0 16 16"><rect x="1.5" y="1.5" width="13" height="13" fill="#d8d060" stroke="#444" stroke-width="1.3" /><rect x="4" y="2" width="8" height="5" fill="#e8e8f0" stroke="#666" stroke-width="1" /><rect x="4" y="9" width="8" height="5.5" fill="#333" stroke="#333" stroke-width="1" /><rect x="9" y="10" width="2" height="3" fill="#eee" stroke="none" stroke-width="1" /></svg>
<svg class="a" style="left:67px;top:35px" width="13" height="13" viewBox="0 0 16 16"><path d="M4 2h8v4H4z" fill="#f0f0f0" stroke="#555" stroke-width="1" /><path d="M1.5 6h13v7h-13z" fill="#aaa" stroke="#555" stroke-width="1.2" /><rect x="4" y="11" width="8" height="3" fill="#e0e0e0" stroke="#555" stroke-width="1" /><rect x="7" y="8" width="2" height="1.5" fill="#ee0" stroke="none" stroke-width="1" /></svg>
<svg class="a" style="left:83px;top:35px" width="13" height="13" viewBox="0 0 16 16"><path d="M2.5 1.5h7l3 3v10h-10z" fill="#f6f6f6" stroke="#444" stroke-width="1.1" /><circle cx="9" cy="10" r="3" fill="#fff" stroke="#333" stroke-width="1.2"/><path d="M11 12l3 3" fill="none" stroke="#333" stroke-width="1.6" /></svg>
<svg class="a" style="left:173px;top:35px" width="13" height="13" viewBox="0 0 16 16"><defs><linearGradient id="cg" x1="0" y1="0" x2="1" y2="1"><stop offset="0" stop-color="#2ee0a0"/><stop offset="0.5" stop-color="#f0f040"/><stop offset="1" stop-color="#f040e0"/></linearGradient></defs><rect x="5" y="6" width="10" height="9" fill="url(#cg)" stroke="#333" stroke-width="1" /><rect x="5" y="12" width="10" height="3" fill="#3030a0" stroke="none" stroke-width="1" /><path d="M2 4l3-3 2 2-3 3z" fill="#eee" stroke="#555" stroke-width="0.8" /><path d="M8 8l4 2.5-4 2.5z" fill="#ffffa0" stroke="none" stroke-width="1" /></svg>
<svg class="a" style="left:207px;top:36px" width="13" height="13" viewBox="0 0 16 16"><circle cx="6" cy="6" r="4.5" fill="#aef" stroke="#222" stroke-width="1.6"/><path d="M9.5 9.5l5 5" fill="none" stroke="#222" stroke-width="2.4" /></svg>
<svg class="a" style="left:220.5px;top:36px" width="13" height="13" viewBox="0 0 16 16"><circle cx="8" cy="6.5" r="5" fill="#ff4" stroke="#664" stroke-width="1"/><rect x="6" y="11" width="4" height="3" fill="#777" stroke="#555" stroke-width="1" /><path d="M8 0v1M1 6h1M14 6h1M3 2l1 1M13 2l-1 1" fill="none" stroke="#bb0" stroke-width="1" /></svg>
<svg class="a" style="left:233.5px;top:36px" width="13" height="13" viewBox="0 0 16 16"><path d="M6 9V2.5a1.3 1.3 0 0 1 2.6 0V8l1-.5a1.2 1.2 0 0 1 1.8 .6l.4-.2a1.2 1.2 0 0 1 1.7 1V12q0 3.5-3.5 3.5H8.5q-2.5 0-3.5-2.5l-1.5-3a1 1 0 0 1 1.5-1z" fill="#fff" stroke="#222" stroke-width="1.1" /></svg>
<div class="a" style="left:246px;top:37px;width:9px;height:11px;background:#fff;border:1.2px solid #333"></div>
<svg class="a" style="left:9px;top:54px" width="13" height="13" viewBox="0 0 16 16"><rect x="1.5" y="2.5" width="11" height="11" fill="#f0f0f4" stroke="#555" stroke-width="1.3" /><path d="M3.5 5.5h6M3.5 8h3M7 9.5h4" fill="none" stroke="#777" stroke-width="1" /></svg>
<svg class="a" style="left:26.5px;top:54px" width="13" height="13" viewBox="0 0 16 16"><text x="1" y="15" font-size="15.5" fill="#444" font-weight="bold" font-family="Liberation Sans" textLength="13.5" lengthAdjust="spacingAndGlyphs">RP</text></svg>
<svg class="a" style="left:46.5px;top:54px" width="13" height="13" viewBox="0 0 16 16"><circle cx="6.5" cy="6.5" r="5" fill="#fff" stroke="#333" stroke-width="1.4"/><path d="M10 10l4.5 4.5" fill="none" stroke="#3a3aa8" stroke-width="2.2" /><path d="M4 9a4 4 0 0 0 5 0" fill="none" stroke="#5ee" stroke-width="1.3" /><path d="M4 6.5h5M6.5 4v5" fill="none" stroke="#333" stroke-width="1.8" /></svg>
<svg class="a" style="left:62.5px;top:54px" width="13" height="13" viewBox="0 0 16 16"><rect x="1.5" y="1.5" width="13" height="13" fill="none" stroke="#555" stroke-width="1" stroke-dasharray="2 3"/><path d="M5 8h6M8 5v6" fill="none" stroke="#333" stroke-width="1.8" /><path d="M10 14h4v-4" fill="none" stroke="#4dd" stroke-width="1.3" /></svg>
<svg class="a" style="left:78.5px;top:54px" width="13" height="13" viewBox="0 0 16 16"><circle cx="6.5" cy="6.5" r="5" fill="#fff" stroke="#333" stroke-width="1.4"/><path d="M10 10l4.5 4.5" fill="none" stroke="#3a3aa8" stroke-width="2.2" /><path d="M4 9a4 4 0 0 0 5 0" fill="none" stroke="#5ee" stroke-width="1.3" /><path d="M4 6.5h5" fill="none" stroke="#333" stroke-width="1.8" /></svg>
<svg class="a" style="left:94.5px;top:54px" width="13" height="13" viewBox="0 0 16 16"><circle cx="6.5" cy="6.5" r="5" fill="#fff" stroke="#333" stroke-width="1.4"/><path d="M10 10l4.5 4.5" fill="none" stroke="#3a3aa8" stroke-width="2.2" /><path d="M4 9a4 4 0 0 0 5 0" fill="none" stroke="#5ee" stroke-width="1.3" /><text x="3.8" y="9.5" font-size="7" fill="#333" font-weight="bold" font-family="Liberation Sans">B</text></svg>
<svg class="a" style="left:110.5px;top:54px" width="13" height="13" viewBox="0 0 16 16"><circle cx="6.5" cy="6.5" r="5" fill="#fff" stroke="#333" stroke-width="1.4"/><path d="M10 10l4.5 4.5" fill="none" stroke="#3a3aa8" stroke-width="2.2" /><path d="M4 9a4 4 0 0 0 5 0" fill="none" stroke="#5ee" stroke-width="1.3" /><text x="3.8" y="9.5" font-size="7" fill="#333" font-weight="bold" font-family="Liberation Sans">R</text></svg>
<svg class="a" style="left:126.5px;top:54px" width="13" height="13" viewBox="0 0 16 16"><rect x="1.5" y="1.5" width="13" height="13" fill="none" stroke="#555" stroke-width="1" stroke-dasharray="2 3"/><path d="M12 1l1 3 3 1-3 1-1 3-1-3-3-1 3-1z" fill="#ee4" stroke="none" stroke-width="1" /></svg>
<svg class="a" style="left:142.5px;top:54px" width="13" height="13" viewBox="0 0 16 16"><circle cx="6.5" cy="6.5" r="5" fill="#fff" stroke="#333" stroke-width="1.4"/><path d="M10 10l4.5 4.5" fill="none" stroke="#3a3aa8" stroke-width="2.2" /><path d="M4 9a4 4 0 0 0 5 0" fill="none" stroke="#5ee" stroke-width="1.3" /><circle cx="6" cy="7" r="2" fill="#35c" stroke="none" stroke-width="1"/></svg>
<svg class="a" style="left:163px;top:54px" width="13" height="13" viewBox="0 0 16 16"><path d="M1 8h9v7M1 11h6v4M4 8V2" fill="none" stroke="#777" stroke-width="1.6" /><path d="M11 5l3-3" fill="none" stroke="#35c" stroke-width="1.4" /><rect x="10" y="6" width="5" height="2" fill="#aaa" stroke="none" stroke-width="1" /></svg>
<svg class="a" style="left:179px;top:54px" width="13" height="13" viewBox="0 0 16 16"><path d="M1 8h10v7M1 11h7v4M4 8V2M6 4l2-2 2 2M13 2v10" fill="none" stroke="#aab" stroke-width="1.4" /></svg>
<svg class="a" style="left:199.5px;top:54px" width="13" height="13" viewBox="0 0 16 16"><rect x="1.5" y="2.5" width="12" height="11" fill="#fafafa" stroke="#444" stroke-width="1.3" /><path d="M5 8h5" fill="none" stroke="#333" stroke-width="2" /><path d="M14 4v10H3" fill="none" stroke="#bbb" stroke-width="1" /></svg>
<svg class="a" style="left:215.5px;top:54px" width="13" height="13" viewBox="0 0 16 16"><rect x="1.5" y="2.5" width="12" height="11" fill="#fafafa" stroke="#444" stroke-width="1.3" /><path d="M4.5 8h6M7.5 5v6" fill="none" stroke="#333" stroke-width="2" /><path d="M14 4v10H3" fill="none" stroke="#bbb" stroke-width="1" /></svg>
<svg class="a" style="left:231.5px;top:54px" width="13" height="13" viewBox="0 0 16 16"><rect x="1.5" y="2.5" width="12" height="11" fill="#fafafa" stroke="#444" stroke-width="1.3" /><text x="4.5" y="12" font-size="9" fill="#333" font-weight="bold" font-family="Liberation Sans">?</text><path d="M14 4v10H3" fill="none" stroke="#bbb" stroke-width="1" /></svg>
<svg class="a" style="left:253.5px;top:54px" width="13" height="13" viewBox="0 0 16 16"><path d="M3 9q4-6 10 0" fill="none" stroke="#4a64c8" stroke-width="1.4" /><path d="M1.5 6.5l1.5 3 3-1" fill="none" stroke="#4a64c8" stroke-width="1.4" /></svg>
<svg class="a" style="left:268.5px;top:54px" width="13" height="13" viewBox="0 0 16 16"><path d="M13 9q-4-6-10 0" fill="none" stroke="#9aa8d8" stroke-width="1.4" /><path d="M14.5 6.5l-1.5 3-3-1" fill="none" stroke="#9aa8d8" stroke-width="1.4" /></svg>
<svg class="a" style="left:288.5px;top:54px" width="13" height="13" viewBox="0 0 16 16"><path d="M2 10l6-7h6l-6 8v3H4z" fill="#e8e8ee" stroke="#555" stroke-width="1.1" /><path d="M6 5h7l-4 5" fill="none" stroke="#3848b0" stroke-width="2" /><path d="M2 10h6v4" fill="none" stroke="#555" stroke-width="1" /></svg>
<svg class="a" style="left:305.5px;top:54px" width="13" height="13" viewBox="0 0 16 16"><rect x="7.5" y="1.5" width="7" height="4" fill="#fafafa" stroke="#555" stroke-width="1.3" /><rect x="1.5" y="10.5" width="6" height="4" fill="none" stroke="#555" stroke-width="1" stroke-dasharray="1.5 1"/><path d="M5 10l4-5" fill="none" stroke="#35c" stroke-width="1.2" /></svg>
<svg class="a" style="left:321.5px;top:54px" width="13" height="13" viewBox="0 0 16 16"><rect x="6.5" y="1.5" width="8" height="6" fill="#fafafa" stroke="#555" stroke-width="1.3" /><circle cx="10" cy="4" r="1" fill="#35c" stroke="none" stroke-width="1"/><rect x="1.5" y="10.5" width="4" height="4" fill="none" stroke="#555" stroke-width="1" stroke-dasharray="1.5 1"/><path d="M4 11l6-7" fill="none" stroke="#35c" stroke-width="1" /></svg>
<svg class="a" style="left:337.5px;top:54px" width="13" height="13" viewBox="0 0 16 16"><path d="M4 1l7 4-4 8-6-4z" fill="#f2f2f2" stroke="#555" stroke-width="1.2" /><path d="M12 3v10l-3 2" fill="none" stroke="#66c" stroke-width="1" stroke-dasharray="1.5 1"/><circle cx="4" cy="2" r="1" fill="#e44" stroke="none" stroke-width="1"/></svg>
<svg class="a" style="left:353.5px;top:54px" width="13" height="13" viewBox="0 0 16 16"><rect x="7.5" y="1.5" width="7" height="4" fill="#fafafa" stroke="#555" stroke-width="1.3" /><rect x="1.5" y="10.5" width="7" height="4" fill="#fafafa" stroke="#555" stroke-width="1.3" /><path d="M6 10l4-5" fill="none" stroke="#35c" stroke-width="1.2" /></svg>
<svg class="a" style="left:369.5px;top:54px" width="13" height="13" viewBox="0 0 16 16"><circle cx="7" cy="4" r="2.8" fill="#ddd" stroke="#555" stroke-width="1"/><path d="M7 7v6M4 15l3-3 3 3" fill="none" stroke="#555" stroke-width="1" /><path d="M8 8l6 4-4 1z" fill="#e33" stroke="none" stroke-width="1" /><circle cx="2" cy="6" r="1.2" fill="#c4c" stroke="none" stroke-width="1"/></svg>
<svg class="a" style="left:385.5px;top:54px" width="13" height="13" viewBox="0 0 16 16"><rect x="6.5" y="1.5" width="8" height="7" fill="#f4f4f4" stroke="#555" stroke-width="1.3" /><rect x="1.5" y="11.5" width="5" height="3" fill="#fafafa" stroke="#555" stroke-width="1" /><path d="M6 2l-4 9M14 9l-4 6H6" fill="none" stroke="#35c" stroke-width="1" /></svg>
<svg class="a" style="left:401.5px;top:54px" width="13" height="13" viewBox="0 0 16 16"><rect x="2.5" y="1.5" width="9" height="5" fill="#ddd" stroke="#555" stroke-width="1.3" /><rect x="5.5" y="8.5" width="9" height="6" fill="#ddd" stroke="#555" stroke-width="1.3" /><path d="M12 2q3 2 1 6" fill="none" stroke="#e33" stroke-width="1.2" /><rect x="7" y="11" width="6" height="2" fill="#e33" stroke="none" stroke-width="1" /></svg>
<svg class="a" style="left:422.5px;top:54px" width="13" height="13" viewBox="0 0 16 16"><rect x="4.5" y="4.5" width="8" height="8" fill="#f6f6f6" stroke="#555" stroke-width="1.3" /><path d="M2 2h3M2 2v3M14 2v3M14 14v-3M2 14h3" fill="none" stroke="#35c" stroke-width="1.3" /><path d="M4.5 4.5l-2-2" fill="none" stroke="#555" stroke-width="1" /></svg>
<svg class="a" style="left:438.5px;top:54px" width="13" height="13" viewBox="0 0 16 16"><rect x="4.5" y="5.5" width="9" height="8" fill="#f6f6f6" stroke="#555" stroke-width="1.3" /><path d="M2 3h4l-2 3M13 3v3M2 13v-3M14 14h-3" fill="none" stroke="#35c" stroke-width="1.3" /></svg>
<svg class="a" style="left:458.5px;top:54px" width="13" height="13" viewBox="0 0 16 16"><rect x="1.5" y="1.5" width="6" height="6" fill="#ccc" stroke="#555" stroke-width="1.2" /><rect x="9.5" y="9.5" width="5" height="5" fill="#ccc" stroke="#555" stroke-width="1.2" /><rect x="4" y="4" width="8" height="8" fill="#ffffa0" stroke="#555" stroke-width="1.2" /></svg>
<svg class="a" style="left:474.5px;top:54px" width="13" height="13" viewBox="0 0 16 16"><rect x="1.5" y="1.5" width="6" height="6" fill="#bbb" stroke="#555" stroke-width="1.2" /><rect x="4" y="4" width="8" height="8" fill="#ffffa0" stroke="#555" stroke-width="1.2" /><rect x="9.5" y="9.5" width="5" height="5" fill="#ccc" stroke="#555" stroke-width="1.2" /></svg>
<svg class="a" style="left:497.5px;top:54px" width="13" height="13" viewBox="0 0 16 16"><path d="M1 13l6-7 6 7M7 6v7" fill="none" stroke="#555" stroke-width="1.3" /><rect x="5" y="2" width="5" height="4" fill="#cc3" stroke="#555" stroke-width="1" /><path d="M14 1v14H2" fill="none" stroke="#66c" stroke-width="1.3" /></svg>
<svg class="a" style="left:526.5px;top:54px" width="13" height="13" viewBox="0 0 16 16"><path d="M1 13l6-7 6 7M7 6v7" fill="none" stroke="#555" stroke-width="1.3" /><rect x="5" y="2" width="5" height="4" fill="#cc3" stroke="#555" stroke-width="1" /><path d="M14 1v14H2" fill="none" stroke="#66c" stroke-width="1.3" /></svg>
<svg class="a" style="left:543px;top:54px" width="13" height="13" viewBox="0 0 16 16"><rect x="4.5" y="1.5" width="10" height="4" fill="#e8e870" stroke="#555" stroke-width="1.2" /><path d="M2 9l10 4" fill="none" stroke="#35c" stroke-width="1.3" /><circle cx="2" cy="9" r="1.4" fill="#e33" stroke="none" stroke-width="1"/><circle cx="12" cy="13" r="1.4" fill="#e33" stroke="none" stroke-width="1"/></svg>
<svg class="a" style="left:558.5px;top:54px" width="13" height="13" viewBox="0 0 16 16"><rect x="4.5" y="1.5" width="10" height="4" fill="#e8e870" stroke="#555" stroke-width="1.2" /><rect x="2" y="7" width="10" height="7" fill="#88a" stroke="none" stroke-width="0" opacity="0.6"/><circle cx="2" cy="7" r="1.3" fill="#e33" stroke="none" stroke-width="1"/><circle cx="12" cy="14" r="1.3" fill="#e33" stroke="none" stroke-width="1"/><circle cx="2" cy="14" r="1.3" fill="#e33" stroke="none" stroke-width="1"/></svg>
<svg class="a" style="left:573.5px;top:54px" width="13" height="13" viewBox="0 0 16 16"><rect x="2.5" y="3.5" width="11" height="4" fill="#e8e870" stroke="#555" stroke-width="1.2" /><path d="M1 11h14" fill="none" stroke="#35c" stroke-width="1.3" /><circle cx="1" cy="11" r="1.2" fill="#e33" stroke="none" stroke-width="1"/><circle cx="15" cy="11" r="1.2" fill="#e33" stroke="none" stroke-width="1"/></svg>
<svg class="a" style="left:594.5px;top:54px" width="13" height="13" viewBox="0 0 16 16"><path d="M2 5l3-3h9v9l-3 3H2z" fill="#bfe" stroke="#555" stroke-width="1.2" /><path d="M2 5h9v9M11 5l3-3" fill="none" stroke="#555" stroke-width="1" /><circle cx="6" cy="9" r="1.2" fill="#e33" stroke="none" stroke-width="1"/></svg>
<svg class="a" style="left:614.5px;top:54px" width="13" height="13" viewBox="0 0 16 16"><path d="M1 11l12 4" fill="none" stroke="#e33" stroke-width="1.6" /><circle cx="10" cy="5" r="3" fill="#fff" stroke="#333" stroke-width="1.2"/><path d="M12 7l3 3" fill="none" stroke="#35c" stroke-width="1.6" /></svg>
<svg class="a" style="left:636.5px;top:54px" width="13" height="13" viewBox="0 0 16 16"><text x="1" y="6" font-size="5" fill="#555" font-weight="bold" font-family="Liberation Sans">ABB</text><text x="1" y="14" font-size="5" fill="#555" font-weight="bold" font-family="Liberation Sans">CDE</text><path d="M8 7v2" fill="none" stroke="#35c" stroke-width="1" /></svg>
<svg class="a" style="left:651.5px;top:54px" width="13" height="13" viewBox="0 0 16 16"><path d="M3 2l2 3h2l2-3M9 2l2 3" fill="none" stroke="#aab" stroke-width="1.2" /><text x="0" y="14" font-size="6" fill="#aab" font-weight="bold" font-family="Liberation Sans">TEXT</text></svg>
<svg class="a" style="left:778.5px;top:54px" width="13" height="13" viewBox="0 0 16 16"><path d="M2 14L14 2" fill="none" stroke="#444" stroke-width="1" /><circle cx="2" cy="14" r="1.5" fill="#e33" stroke="none" stroke-width="1"/><circle cx="14" cy="2" r="1.5" fill="#e33" stroke="none" stroke-width="1"/></svg>
<svg class="a" style="left:794.5px;top:54px" width="13" height="13" viewBox="0 0 16 16"><text x="4" y="5" font-size="5" fill="#444" font-weight="bold" font-family="Liberation Sans">PL</text><path d="M1 12l4-5 4 5 5-4" fill="none" stroke="#36c" stroke-width="1.1" /><circle cx="1" cy="12" r="1" fill="#e33" stroke="none" stroke-width="1"/><circle cx="9" cy="12" r="1" fill="#e33" stroke="none" stroke-width="1"/></svg>
<svg class="a" style="left:815px;top:54px" width="13" height="13" viewBox="0 0 16 16"><circle cx="8" cy="8" r="6" fill="none" stroke="#444" stroke-width="1.1"/><path d="M8 8h6" fill="none" stroke="#e33" stroke-width="1.2" /><circle cx="8" cy="8" r="1.3" fill="#e33" stroke="none" stroke-width="1"/></svg>
<svg class="a" style="left:831px;top:54px" width="13" height="13" viewBox="0 0 16 16"><path d="M1 3q8 0 13 12" fill="none" stroke="#444" stroke-width="1.1" /><path d="M2 15l6-6" fill="none" stroke="#e33" stroke-width="1.2" /><circle cx="8" cy="9" r="1.2" fill="#e33" stroke="none" stroke-width="1"/></svg>
<svg class="a" style="left:847px;top:54px" width="13" height="13" viewBox="0 0 16 16"><path d="M2 2q9 0 12 12" fill="none" stroke="#444" stroke-width="1.1" /><circle cx="2" cy="2" r="1.5" fill="#e33" stroke="none" stroke-width="1"/><circle cx="11" cy="6" r="1.5" fill="#e33" stroke="none" stroke-width="1"/><circle cx="14" cy="14" r="1.5" fill="#e33" stroke="none" stroke-width="1"/></svg>
<svg class="a" style="left:868.5px;top:54px" width="13" height="13" viewBox="0 0 16 16"><rect x="1.5" y="1.5" width="13" height="13" fill="none" stroke="#777" stroke-width="1.2" /><rect x="3.5" y="3.5" width="9" height="9" fill="#e8e8f0" stroke="#888" stroke-width="1" /></svg>
<svg class="a" style="left:883.5px;top:54px" width="13" height="13" viewBox="0 0 16 16"><text x="1.5" y="14.5" font-size="15" fill="#222" font-weight="bold" font-family="Liberation Serif">A</text></svg>
<svg class="a" style="left:903.5px;top:54px" width="13" height="13" viewBox="0 0 16 16"><rect x="2.5" y="2.5" width="11" height="9" fill="none" stroke="#555" stroke-width="1.3" /><circle cx="3" cy="14" r="1.3" fill="#e33" stroke="none" stroke-width="1"/></svg>
<svg class="a" style="left:921.5px;top:54px" width="13" height="13" viewBox="0 0 16 16"><path d="M3 14q-2-5 2-6h2v-5a2 2 0 0 1 4 0v11" fill="none" stroke="#aab" stroke-width="1.2" /></svg>
<svg class="a" style="left:940.5px;top:54px" width="13" height="13" viewBox="0 0 16 16"><rect x="1.5" y="1.5" width="9" height="12" fill="none" stroke="#aab" stroke-width="1.2" /><path d="M4 5h5M4 8h5M12 5v10M14 10v5" fill="none" stroke="#aab" stroke-width="1.2" /></svg>
<svg class="a" style="left:956.5px;top:54px" width="13" height="13" viewBox="0 0 16 16"><path d="M2 2l4 4-2 4 4 4 4-4-3-3" fill="none" stroke="#aab" stroke-width="1.2" /><circle cx="4" cy="4" r="2" fill="none" stroke="#aab" stroke-width="1"/><circle cx="11" cy="13" r="2" fill="none" stroke="#aab" stroke-width="1"/></svg>
<svg class="a" style="left:972.5px;top:54px" width="13" height="13" viewBox="0 0 16 16"><path d="M1 14h14M1 14l9-11M4 10q2 2 2 4" fill="none" stroke="#aab" stroke-width="1.2" /><circle cx="12" cy="4" r="2" fill="none" stroke="#aab" stroke-width="1"/></svg>
<svg class="a" style="left:988.5px;top:54px" width="13" height="13" viewBox="0 0 16 16"><path d="M1 14h14M3 14l8-10M6 10q3 1 3 4" fill="none" stroke="#aab" stroke-width="1.2" /><circle cx="13" cy="3" r="2" fill="none" stroke="#aab" stroke-width="1"/></svg>
<svg class="a" style="left:1005px;top:54px" width="13" height="13" viewBox="0 0 16 16"><path d="M3 15V7h5V3M10 3h4M10 6h4M10 9h4" fill="none" stroke="#aab" stroke-width="1.1" stroke-dasharray="1 1"/></svg>
<svg class="a" style="left:1021px;top:54px" width="13" height="13" viewBox="0 0 16 16"><path d="M1 12h14" fill="none" stroke="#222" stroke-width="1.8" /><path d="M2 11V6h12v5" fill="none" stroke="#2a2" stroke-width="1" /><text x="5" y="5" font-size="5" fill="#2a2" font-weight="bold" font-family="Liberation Sans">222</text></svg>
<svg class="a" style="left:1042.5px;top:54px" width="13" height="13" viewBox="0 0 16 16"><rect x="1.5" y="1.5" width="13" height="13" fill="#eee" stroke="#999" stroke-width="1.2" /><path d="M2 10l8-8M2 14l12-12M6 14l8-8" fill="none" stroke="#999" stroke-width="1.2" /></svg>
<svg class="a" style="left:511px;top:60px;" width="7" height="4" viewBox="0 0 7 4"><path d="M0 0h7l-3.5 3.5z" fill="#777"/></svg>
<div class="a" style="left:46px;top:73px;width:16px;height:16px;border-radius:2px;background:linear-gradient(#fde8bd,#fbc36a);border:1px solid #eab060"></div>
<div class="a" style="left:110px;top:73px;width:16px;height:16px;border-radius:2px;background:linear-gradient(#fde8bd,#fbc36a);border:1px solid #eab060"></div>
<div class="a" style="left:250px;top:73px;width:16px;height:16px;border-radius:2px;background:linear-gradient(#fde8bd,#fbc36a);border:1px solid #eab060"></div>
<div class="a" style="left:282px;top:73px;width:16px;height:16px;border-radius:2px;background:linear-gradient(#fde8bd,#fbc36a);border:1px solid #eab060"></div>
<div class="a" style="left:560px;top:73px;width:16px;height:16px;border-radius:2px;background:linear-gradient(#fde8bd,#fbc36a);border:1px solid #eab060"></div>
<div class="a" style="left:576px;top:73px;width:16px;height:16px;border-radius:2px;background:linear-gradient(#fde8bd,#fbc36a);border:1px solid #eab060"></div>
<div class="a" style="left:592px;top:73px;width:16px;height:16px;border-radius:2px;background:linear-gradient(#fde8bd,#fbc36a);border:1px solid #eab060"></div>
<div class="a" style="left:608px;top:73px;width:16px;height:16px;border-radius:2px;background:linear-gradient(#fde8bd,#fbc36a);border:1px solid #eab060"></div>
<div class="a" style="left:624px;top:73px;width:16px;height:16px;border-radius:2px;background:linear-gradient(#fde8bd,#fbc36a);border:1px solid #eab060"></div>
<div class="a" style="left:640px;top:73px;width:16px;height:16px;border-radius:2px;background:linear-gradient(#fde8bd,#fbc36a);border:1px solid #eab060"></div>
<div class="a" style="left:677px;top:73px;width:16px;height:16px;border-radius:2px;background:linear-gradient(#fde8bd,#fbc36a);border:1px solid #eab060"></div>
<div class="a" style="left:888px;top:73px;width:16px;height:16px;border-radius:2px;background:linear-gradient(#fde8bd,#fbc36a);border:1px solid #eab060"></div>
<div class="a" style="left:1035px;top:73px;width:16px;height:16px;border-radius:2px;background:linear-gradient(#fde8bd,#fbc36a);border:1px solid #eab060"></div>
<div class="a" style="left:1056px;top:73px;width:16px;height:16px;border-radius:2px;background:linear-gradient(#fde8bd,#fbc36a);border:1px solid #eab060"></div>
<div class="a" style="left:1078px;top:73px;width:16px;height:16px;border-radius:2px;background:linear-gradient(#fde8bd,#fbc36a);border:1px solid #eab060"></div>
<svg class="a" style="left:9px;top:74.5px" width="13" height="13" viewBox="0 0 16 16"><text x="0" y="13" font-size="13" fill="#444" font-weight="normal" font-family="Liberation Sans">色</text></svg>
<svg class="a" style="left:32px;top:74.5px" width="13" height="13" viewBox="0 0 16 16"><path d="M2 2v12M14 2v12" fill="none" stroke="#444" stroke-width="2" /><path d="M4 8h8M4 8l3-3M4 8l3 3M12 8l-3-3M12 8l-3 3" fill="none" stroke="#3848c8" stroke-width="1.6" /></svg>
<svg class="a" style="left:47.5px;top:74.5px" width="13" height="13" viewBox="0 0 16 16"><rect x="1.5" y="1.5" width="13" height="13" fill="none" stroke="#333" stroke-width="1" stroke-dasharray="1 2"/><text x="3" y="12" font-size="9" fill="#222" font-weight="bold" font-family="Liberation Sans">IF</text></svg>
<svg class="a" style="left:63px;top:74.5px" width="13" height="13" viewBox="0 0 16 16"><rect x="1.5" y="1.5" width="8" height="6" fill="#ffe060" stroke="#e44" stroke-width="1.2" /><rect x="6.5" y="9.5" width="8" height="5" fill="#fff" stroke="#e66" stroke-width="1.2" /><path d="M11 2v5M1 9v5" fill="none" stroke="#46c" stroke-width="1.2" /></svg>
<svg class="a" style="left:79px;top:74.5px" width="13" height="13" viewBox="0 0 16 16"><path d="M1 5q4-4 7 3t7 5" fill="none" stroke="#666" stroke-width="1.2" /><path d="M3 3q4-2 7 5t4 5" fill="none" stroke="#444" stroke-width="1" /><circle cx="9" cy="2" r="1" fill="#e66" stroke="none" stroke-width="1"/><circle cx="3" cy="11" r="1" fill="#e66" stroke="none" stroke-width="1"/><circle cx="12" cy="14" r="1" fill="#e66" stroke="none" stroke-width="1"/></svg>
<svg class="a" style="left:95px;top:74.5px" width="13" height="13" viewBox="0 0 16 16"><rect x="1.5" y="1.5" width="13" height="13" fill="none" stroke="#777" stroke-width="1" stroke-dasharray="1 2"/><text x="3.5" y="12" font-size="9" fill="#444" font-weight="bold" font-family="Liberation Sans">G</text></svg>
<svg class="a" style="left:111.5px;top:74.5px" width="13" height="13" viewBox="0 0 16 16"><path d="M6 1l4 4-4 4-4-4z" fill="#4de" stroke="#333" stroke-width="1" /><path d="M6 9l3 3" fill="none" stroke="#222" stroke-width="1.3" /><path d="M3 11h9l3 4H2z" fill="#e22" stroke="#333" stroke-width="1" /></svg>
<svg class="a" style="left:132px;top:74.5px" width="13" height="13" viewBox="0 0 16 16"><text x="4" y="15" font-size="12" fill="#444" font-weight="normal" font-family="Liberation Serif">A</text><path d="M2 3l2 0" fill="none" stroke="#333" stroke-width="1.4" /><path d="M3 6l3 2" fill="none" stroke="#35c" stroke-width="1.2" /></svg>
<svg class="a" style="left:152.5px;top:74.5px" width="13" height="13" viewBox="0 0 16 16"><rect x="1.5" y="2.5" width="13" height="11" fill="#e8e8e8" stroke="#666" stroke-width="1.3" /><rect x="4" y="5" width="8" height="6" fill="#5aa" stroke="none" stroke-width="1" /></svg>
<svg class="a" style="left:168.5px;top:74.5px" width="13" height="13" viewBox="0 0 16 16"><rect x="1.5" y="1.5" width="13" height="13" fill="#eef" stroke="#555" stroke-width="1.3" /><text x="3" y="7" font-size="4" fill="#46c" font-weight="bold" font-family="Liberation Sans">LAY</text><text x="3" y="13" font-size="4" fill="#46c" font-weight="bold" font-family="Liberation Sans">OUT</text></svg>
<svg class="a" style="left:229.5px;top:74.5px" width="13" height="13" viewBox="0 0 16 16"><path d="M2 1h5l2 2v6H2z" fill="#fff" stroke="#555" stroke-width="1" /><text x="3" y="15" font-size="6" fill="#33e" font-weight="bold" font-family="Liberation Sans">SET</text><circle cx="11" cy="4" r="1.5" fill="#e4e" stroke="none" stroke-width="1"/><circle cx="13" cy="6" r="1" fill="#4ee" stroke="none" stroke-width="1"/></svg>
<svg class="a" style="left:251.5px;top:74.5px" width="13" height="13" viewBox="0 0 16 16"><rect x="1.5" y="1.5" width="12" height="12" fill="none" stroke="#555" stroke-width="1" stroke-dasharray="1.5 1.5"/><circle cx="8" cy="8" r="3.5" fill="none" stroke="#c22" stroke-width="1.6"/><path d="M6 8h4M8 5v6" fill="none" stroke="#a22" stroke-width="1" /></svg>
<svg class="a" style="left:266.5px;top:74.5px" width="13" height="13" viewBox="0 0 16 16"><circle cx="8" cy="8" r="6.5" fill="#4c4" stroke="#444" stroke-width="1.2"/><path d="M6 4l5 5-3 0 1 3" fill="none" stroke="#fff" stroke-width="1.2" /></svg>
<svg class="a" style="left:283.5px;top:74.5px" width="13" height="13" viewBox="0 0 16 16"><path d="M4 2v11l3-3 2 4 2-1-2-4h4z" fill="#fff" stroke="#222" stroke-width="1.2" /></svg>
<svg class="a" style="left:304px;top:74.5px" width="13" height="13" viewBox="0 0 16 16"><rect x="1.5" y="1.5" width="13" height="12" fill="#bef" stroke="#555" stroke-width="1.2" /><path d="M4 3v9h8" fill="none" stroke="#333" stroke-width="1.2" /></svg>
<svg class="a" style="left:320px;top:74.5px" width="13" height="13" viewBox="0 0 16 16"><rect x="1.5" y="1.5" width="13" height="12" fill="#ff8" stroke="#555" stroke-width="1.2" /><path d="M4 3v9h8" fill="none" stroke="#333" stroke-width="1.2" /><path d="M9 5h4M11 3v4" fill="none" stroke="#333" stroke-width="1.6" /></svg>
<svg class="a" style="left:436.5px;top:74.5px" width="13" height="13" viewBox="0 0 16 16"><rect x="1.5" y="3.5" width="13" height="9" fill="#eef" stroke="#99a" stroke-width="1.2" /><text x="3" y="10" font-size="4" fill="#99a" font-weight="bold" font-family="Liberation Sans">GCP</text></svg>
<svg class="a" style="left:452.5px;top:74.5px" width="13" height="13" viewBox="0 0 16 16"><path d="M1.5 3.5h6l1 1h6v9h-13z" fill="#eef" stroke="#99a" stroke-width="1.2" /><text x="3" y="11" font-size="4" fill="#99a" font-weight="bold" font-family="Liberation Sans">GCP</text></svg>
<svg class="a" style="left:472.5px;top:74.5px" width="13" height="13" viewBox="0 0 16 16"><rect x="2.5" y="1.5" width="11" height="13" fill="#5bb" stroke="#555" stroke-width="1.2" /><rect x="4" y="3" width="8" height="3" fill="#dff" stroke="none" stroke-width="1" /><path d="M4 8h8M4 10.5h8M4 13h8" fill="none" stroke="#dff" stroke-width="1" /></svg>
<svg class="a" style="left:494px;top:74.5px" width="13" height="13" viewBox="0 0 16 16"><circle cx="5" cy="11" r="3" fill="none" stroke="#aab" stroke-width="1.2"/><path d="M3 14l-2 2M8 3h6M8 6h6M12 9v6" fill="none" stroke="#aab" stroke-width="1.2" /></svg>
<svg class="a" style="left:514.5px;top:74.5px" width="13" height="13" viewBox="0 0 16 16"><rect x="1.5" y="1.5" width="10" height="9" fill="none" stroke="#aab" stroke-width="1.2" /><rect x="4.5" y="5.5" width="10" height="9" fill="none" stroke="#aab" stroke-width="1.2" /></svg>
<svg class="a" style="left:541.5px;top:74.5px" width="13" height="13" viewBox="0 0 16 16"><path d="M2 4l12 9M3 13l10-10" fill="none" stroke="#e44" stroke-width="1" /><path d="M1 8l6-6 8 6-6 6z" fill="none" stroke="#888" stroke-width="1" /></svg>
<svg class="a" style="left:561.5px;top:74.5px" width="13" height="13" viewBox="0 0 16 16"><path d="M2 8l3-5 6-1 4 5-2 6-6 1z" fill="#4dd" stroke="#333" stroke-width="1.1" /><path d="M5 4l3 5 5-1" fill="none" stroke="#333" stroke-width="0.8" /></svg>
<svg class="a" style="left:577.5px;top:74.5px" width="13" height="13" viewBox="0 0 16 16"><path d="M2 6l3-5 3 5z" fill="#fff" stroke="#333" stroke-width="1" /><path d="M9 15l3-5 3 5z" fill="#dd2" stroke="#333" stroke-width="1" /><path d="M4 6l7 6" fill="none" stroke="#e22" stroke-width="1.6" /></svg>
<svg class="a" style="left:593.5px;top:74.5px" width="13" height="13" viewBox="0 0 16 16"><text x="0" y="15" font-size="9" fill="#222" font-weight="normal" font-family="Liberation Sans">道</text><circle cx="11" cy="4" r="3" fill="#5cc" stroke="#333" stroke-width="1"/></svg>
<svg class="a" style="left:609.5px;top:74.5px" width="13" height="13" viewBox="0 0 16 16"><path d="M8 1.5l6.5 12h-13z" fill="#faa" stroke="#e22" stroke-width="1.4" /></svg>
<svg class="a" style="left:625.5px;top:74.5px" width="13" height="13" viewBox="0 0 16 16"><path d="M3 13h9l2-2H5z" fill="#eee" stroke="#333" stroke-width="1" /><path d="M6 11V5l4-4v8" fill="none" stroke="#333" stroke-width="1.3" /><path d="M8 3l2-2v7l-2 2z" fill="#3c3" stroke="none" stroke-width="1" /></svg>
<svg class="a" style="left:641.5px;top:74.5px" width="13" height="13" viewBox="0 0 16 16"><rect x="8" y="1" width="7" height="8" fill="#f22" stroke="none" stroke-width="1" /><rect x="1" y="6" width="7" height="5" fill="#3c6" stroke="none" stroke-width="1" /><rect x="1" y="9" width="8" height="6" fill="#22e" stroke="none" stroke-width="1" /></svg>
<svg class="a" style="left:657.5px;top:74.5px" width="13" height="13" viewBox="0 0 16 16"><path d="M2 8l12-6-5 12-1-5z" fill="#ee3" stroke="#999" stroke-width="1" /><path d="M2 4l12 8" fill="none" stroke="#e55" stroke-width="1" /></svg>
<svg class="a" style="left:678.5px;top:74.5px" width="13" height="13" viewBox="0 0 16 16"><rect x="1.5" y="1.5" width="13" height="4" fill="none" stroke="#444" stroke-width="1" stroke-dasharray="1 1"/><rect x="4" y="6" width="8" height="3" fill="#cc8" stroke="#444" stroke-width="1" /><text x="1" y="15" font-size="5" fill="#34c" font-weight="bold" font-family="Liberation Sans">SECT</text><circle cx="14" cy="3" r="1" fill="#e22" stroke="none" stroke-width="1"/></svg>
<svg class="a" style="left:699px;top:74.5px" width="13" height="13" viewBox="0 0 16 16"><rect x="1.5" y="1.5" width="13" height="13" fill="#eef" stroke="#55e" stroke-width="1.4" /><path d="M8 1v14M1 8h14" fill="none" stroke="#55e" stroke-width="1.4" /><rect x="3" y="3" width="3" height="3" fill="#5c5" stroke="none" stroke-width="1" /><rect x="10" y="10" width="3" height="3" fill="#5c5" stroke="none" stroke-width="1" /></svg>
<svg class="a" style="left:713.5px;top:74.5px" width="13" height="13" viewBox="0 0 16 16"><circle cx="6" cy="8" r="4" fill="#46e" stroke="#33a" stroke-width="1"/><path d="M1 1l4 4" fill="none" stroke="#cc3" stroke-width="2" /><text x="7" y="15" font-size="6" fill="#55a" font-weight="bold" font-family="Liberation Sans">SET</text></svg>
<svg class="a" style="left:735.5px;top:74.5px" width="13" height="13" viewBox="0 0 16 16"><rect x="1.5" y="1.5" width="13" height="13" fill="#c6c" stroke="#636" stroke-width="1.3" /><path d="M4 3v10" fill="none" stroke="#fff" stroke-width="1.4" /><text x="6" y="9" font-size="6" fill="#fff" font-weight="bold" font-family="Liberation Sans">3D</text></svg>
<svg class="a" style="left:857.5px;top:74.5px" width="13" height="13" viewBox="0 0 16 16"><path d="M2 3v11h12" fill="none" stroke="#666" stroke-width="1.3" /><text x="5" y="7" font-size="6" fill="#555" font-weight="normal" font-family="Liberation Sans">Y</text><text x="10" y="13" font-size="7" fill="#555" font-weight="normal" font-family="Liberation Sans">x</text></svg>
<svg class="a" style="left:874px;top:74.5px" width="13" height="13" viewBox="0 0 16 16"><path d="M2 13h12" fill="none" stroke="#666" stroke-width="1.3" /><text x="2" y="7" font-size="6" fill="#555" font-weight="normal" font-family="Liberation Sans">Z</text><text x="9" y="13" font-size="7" fill="#555" font-weight="normal" font-family="Liberation Sans">x</text></svg>
<svg class="a" style="left:889.5px;top:74.5px" width="13" height="13" viewBox="0 0 16 16"><path d="M2 2v12h12" fill="none" stroke="#333" stroke-width="1.3" /><text x="4" y="8" font-size="7" fill="#333" font-weight="normal" font-family="Liberation Sans">Z</text><text x="9" y="14" font-size="7" fill="#333" font-weight="normal" font-family="Liberation Sans">Y</text></svg>
<svg class="a" style="left:909.5px;top:74.5px" width="13" height="13" viewBox="0 0 16 16"><path d="M1 12l5-3 5 3M6 9V2M6 9l8 4" fill="none" stroke="#666" stroke-width="1.1" /><rect x="8" y="2" width="5" height="5" fill="none" stroke="#888" stroke-width="1" /></svg>
<svg class="a" style="left:925.5px;top:74.5px" width="13" height="13" viewBox="0 0 16 16"><path d="M2 12l6-3 6 3M8 9V2M2 12l6 3 6-3" fill="none" stroke="#666" stroke-width="1.1" /><text x="6" y="6" font-size="5" fill="#555" font-weight="normal" font-family="Liberation Sans">Z</text></svg>
<svg class="a" style="left:941.5px;top:74.5px" width="13" height="13" viewBox="0 0 16 16"><path d="M1 5l4 3-4 3M11 2l3 4-3 4M6 9l4 6" fill="none" stroke="#666" stroke-width="1.1" /><text x="1" y="15" font-size="5" fill="#555" font-weight="normal" font-family="Liberation Sans">Y</text></svg>
<svg class="a" style="left:958px;top:74.5px" width="13" height="13" viewBox="0 0 16 16"><path d="M2 2l6 4v8L2 10z" fill="none" stroke="#666" stroke-width="1.1" /><text x="9" y="9" font-size="6" fill="#555" font-weight="normal" font-family="Liberation Sans">Y</text><text x="9" y="15" font-size="6" fill="#555" font-weight="normal" font-family="Liberation Sans">X</text></svg>
<svg class="a" style="left:977.5px;top:74.5px" width="13" height="13" viewBox="0 0 16 16"><rect x="4.5" y="5.5" width="8" height="9" fill="#3c3" stroke="#333" stroke-width="1.2" /><path d="M3 2v12h12" fill="none" stroke="#333" stroke-width="1.2" /><text x="10" y="5" font-size="5" fill="#44e" font-weight="bold" font-family="Liberation Sans">3D</text></svg>
<svg class="a" style="left:998.5px;top:74.5px" width="13" height="13" viewBox="0 0 16 16"><path d="M8 3L3 13h10z" fill="none" stroke="#777" stroke-width="1" stroke-dasharray="1 1"/><circle cx="8" cy="4" r="1.6" fill="#e33" stroke="none" stroke-width="1"/><circle cx="3" cy="13" r="1.6" fill="#e33" stroke="none" stroke-width="1"/><circle cx="13" cy="13" r="1.6" fill="#e33" stroke="none" stroke-width="1"/><circle cx="8" cy="10" r="1.6" fill="#e33" stroke="none" stroke-width="1"/></svg>
<svg class="a" style="left:1015.5px;top:74.5px" width="13" height="13" viewBox="0 0 16 16"><defs><radialGradient id="sg" cx="0.35" cy="0.3"><stop offset="0" stop-color="#fff"/><stop offset="1" stop-color="#6a6ae8"/></radialGradient></defs><circle cx="8" cy="8" r="6.8" fill="url(#sg)" stroke="#334" stroke-width="0.8"/></svg>
<svg class="a" style="left:1036.5px;top:74.5px" width="13" height="13" viewBox="0 0 16 16"><path d="M1 4q5-3 8 1M1 8q5-3 8 1M1 12q5-3 12 1" fill="none" stroke="#46c" stroke-width="1.3" /><path d="M1 10q6-2 12 4" fill="none" stroke="#e33" stroke-width="1.3" /><text x="8" y="9" font-size="10" fill="#111" font-weight="bold" font-family="Liberation Sans">Z</text></svg>
<svg class="a" style="left:1057.5px;top:74.5px" width="13" height="13" viewBox="0 0 16 16"><text x="1" y="6" font-size="5.5" fill="#e2e" font-weight="bold" font-family="Liberation Sans">View</text><path d="M2 15q5 0 6-6t6-5" fill="none" stroke="#222" stroke-width="1.2" /></svg>
<svg class="a" style="left:1079.5px;top:74.5px" width="13" height="13" viewBox="0 0 16 16"><path d="M5 12l7-9 3 3-8 8z" fill="#ee3" stroke="#553" stroke-width="1" /><text x="1" y="15" font-size="6" fill="#e2e" font-weight="bold" font-family="Liberation Sans">Z</text></svg>
<svg class="a" style="left:16px;top:84px;" width="6" height="4" viewBox="0 0 6 4"><path d="M0 0h6l-3 3z" fill="#333"/></svg>
<svg class="a" style="left:22px;top:78px;" width="6" height="4" viewBox="0 0 6 4"><path d="M0 0h6l-3 3z" fill="#888"/></svg>
<svg class="a" style="left:4px;top:132px" width="13" height="13" viewBox="0 0 16 16"><path d="M2 14l1.5-4 9-9 2.5 2.5-9 9z" fill="#f0d050" stroke="#777" stroke-width="0.8" /><path d="M12.5 1l2.5 2.5-1.5 1.5-2.5-2.5z" fill="#e05050" stroke="none" stroke-width="1" /><path d="M2 14l1.5-4 2.5 2.5z" fill="#666" stroke="none" stroke-width="1" /></svg>
<svg class="a" style="left:23px;top:132px" width="13" height="13" viewBox="0 0 16 16"><path d="M8 1.5l1.8 4.6h4.7l-3.8 2.9 1.5 4.8-4.2-3-4.2 3 1.5-4.8-3.8-2.9h4.7z" fill="#f8c040" stroke="#d09020" stroke-width="0.8" /></svg>
<svg class="a" style="left:41px;top:132px" width="13" height="13" viewBox="0 0 16 16"><path d="M1 1.5h4v2.5H1M1 10.5h4V13H1" fill="none" stroke="#4c6ea8" stroke-width="1.6" /><rect x="9" y="7" width="6" height="3" fill="#4a8ae0" stroke="#3a5a90" stroke-width="0.8" /><path d="M5 8.5h3" fill="none" stroke="#444" stroke-width="1" /></svg>
<svg class="a" style="left:59px;top:132px" width="13" height="13" viewBox="0 0 16 16"><path d="M1 1.5h4v2.5H1M1 5h4v2.5H1" fill="none" stroke="#4c6ea8" stroke-width="1.6" /><rect x="9" y="11" width="6" height="3" fill="#4a8ae0" stroke="#3a5a90" stroke-width="0.8" /><path d="M5 12.5h3" fill="none" stroke="#444" stroke-width="1.2" /></svg>
<svg class="a" style="left:78px;top:132px" width="13" height="13" viewBox="0 0 16 16"><rect x="1.5" y="3.5" width="11" height="10" fill="#e8eef8" stroke="#5577aa" stroke-width="1" /><rect x="1.5" y="3.5" width="11" height="2.5" fill="#5a8ee0" stroke="none" stroke-width="1" /><path d="M8 11l6-8" fill="none" stroke="#e0c040" stroke-width="2.2" /><path d="M13 2l2 1" fill="none" stroke="#e05050" stroke-width="1.6" /></svg>
<svg class="a" style="left:97px;top:132px" width="13" height="13" viewBox="0 0 16 16"><path d="M3 3l10 10M13 3L3 13" fill="none" stroke="#e83020" stroke-width="2" /></svg>
<svg class="a" style="left:115px;top:132px" width="13" height="13" viewBox="0 0 16 16"><path d="M8 15V4M4 8l4-5 4 5" fill="none" stroke="#1a5cb0" stroke-width="2.2" /></svg>
<svg class="a" style="left:134px;top:132px" width="13" height="13" viewBox="0 0 16 16"><path d="M8 1v11M4 8l4 5 4-5" fill="none" stroke="#1a5cb0" stroke-width="2.2" /></svg>
<svg class="a" style="left:14px;top:150px" width="13" height="13" viewBox="0 0 16 16"><circle cx="6" cy="6" r="4.6" fill="#8ff" stroke="#222" stroke-width="1.5"/><path d="M9.5 9.5l5 5" fill="none" stroke="#222" stroke-width="2.2" /></svg>
<svg class="a" style="left:28px;top:150px" width="13" height="13" viewBox="0 0 16 16"><circle cx="8" cy="6.5" r="4.5" fill="#ff6" stroke="#553" stroke-width="1"/><rect x="6" y="11" width="4" height="3" fill="#666" stroke="#444" stroke-width="1" /><path d="M8 0v1M2 6h1M13 6h1M3 1l1 1M13 1l-1 1M1 3l1 1M15 3l-1 1" fill="none" stroke="#aa0" stroke-width="1" /></svg>
<svg class="a" style="left:40px;top:150px" width="13" height="13" viewBox="0 0 16 16"><path d="M6 9V2.5a1.3 1.3 0 0 1 2.6 0V8l1-.5a1.2 1.2 0 0 1 1.8 .6l.4-.2a1.2 1.2 0 0 1 1.7 1V12q0 3.5-3.5 3.5H8.5q-2.5 0-3.5-2.5l-1.5-3a1 1 0 0 1 1.5-1z" fill="#fff" stroke="#333" stroke-width="1" /></svg>
<svg class="a" style="left:14px;top:163px" width="13" height="13" viewBox="0 0 16 16"><circle cx="6" cy="6" r="4.6" fill="#8ff" stroke="#222" stroke-width="1.5"/><path d="M9.5 9.5l5 5" fill="none" stroke="#222" stroke-width="2.2" /></svg>
<svg class="a" style="left:28px;top:163px" width="13" height="13" viewBox="0 0 16 16"><circle cx="8" cy="6.5" r="4.5" fill="#ff6" stroke="#553" stroke-width="1"/><rect x="6" y="11" width="4" height="3" fill="#666" stroke="#444" stroke-width="1" /><path d="M8 0v1M2 6h1M13 6h1M3 1l1 1M13 1l-1 1M1 3l1 1M15 3l-1 1" fill="none" stroke="#aa0" stroke-width="1" /></svg>
<svg class="a" style="left:40px;top:163px" width="13" height="13" viewBox="0 0 16 16"><path d="M6 9V2.5a1.3 1.3 0 0 1 2.6 0V8l1-.5a1.2 1.2 0 0 1 1.8 .6l.4-.2a1.2 1.2 0 0 1 1.7 1V12q0 3.5-3.5 3.5H8.5q-2.5 0-3.5-2.5l-1.5-3a1 1 0 0 1 1.5-1z" fill="#fff" stroke="#333" stroke-width="1" /></svg>
<svg class="a" style="left:14px;top:176px" width="13" height="13" viewBox="0 0 16 16"><circle cx="6" cy="6" r="4.6" fill="#8ff" stroke="#222" stroke-width="1.5"/><path d="M9.5 9.5l5 5" fill="none" stroke="#222" stroke-width="2.2" /></svg>
<svg class="a" style="left:28px;top:176px" width="13" height="13" viewBox="0 0 16 16"><circle cx="8" cy="6.5" r="4.5" fill="#ff6" stroke="#553" stroke-width="1"/><rect x="6" y="11" width="4" height="3" fill="#666" stroke="#444" stroke-width="1" /><path d="M8 0v1M2 6h1M13 6h1M3 1l1 1M13 1l-1 1M1 3l1 1M15 3l-1 1" fill="none" stroke="#aa0" stroke-width="1" /></svg>
<svg class="a" style="left:40px;top:176px" width="13" height="13" viewBox="0 0 16 16"><path d="M6 9V2.5a1.3 1.3 0 0 1 2.6 0V8l1-.5a1.2 1.2 0 0 1 1.8 .6l.4-.2a1.2 1.2 0 0 1 1.7 1V12q0 3.5-3.5 3.5H8.5q-2.5 0-3.5-2.5l-1.5-3a1 1 0 0 1 1.5-1z" fill="#fff" stroke="#333" stroke-width="1" /></svg>
<svg class="a" style="left:14px;top:189px" width="13" height="13" viewBox="0 0 16 16"><circle cx="6" cy="6" r="4.6" fill="#8ff" stroke="#222" stroke-width="1.5"/><path d="M9.5 9.5l5 5" fill="none" stroke="#222" stroke-width="2.2" /></svg>
<svg class="a" style="left:28px;top:189px" width="13" height="13" viewBox="0 0 16 16"><circle cx="8" cy="6.5" r="4.5" fill="#ff6" stroke="#553" stroke-width="1"/><rect x="6" y="11" width="4" height="3" fill="#666" stroke="#444" stroke-width="1" /><path d="M8 0v1M2 6h1M13 6h1M3 1l1 1M13 1l-1 1M1 3l1 1M15 3l-1 1" fill="none" stroke="#aa0" stroke-width="1" /></svg>
<svg class="a" style="left:40px;top:189px" width="13" height="13" viewBox="0 0 16 16"><path d="M6 9V2.5a1.3 1.3 0 0 1 2.6 0V8l1-.5a1.2 1.2 0 0 1 1.8 .6l.4-.2a1.2 1.2 0 0 1 1.7 1V12q0 3.5-3.5 3.5H8.5q-2.5 0-3.5-2.5l-1.5-3a1 1 0 0 1 1.5-1z" fill="#fff" stroke="#333" stroke-width="1" /></svg>
<svg class="a" style="left:14px;top:202px" width="13" height="13" viewBox="0 0 16 16"><circle cx="6" cy="6" r="4.6" fill="#8ff" stroke="#222" stroke-width="1.5"/><path d="M9.5 9.5l5 5" fill="none" stroke="#222" stroke-width="2.2" /></svg>
<svg class="a" style="left:28px;top:202px" width="13" height="13" viewBox="0 0 16 16"><circle cx="8" cy="6.5" r="4.5" fill="#ff6" stroke="#553" stroke-width="1"/><rect x="6" y="11" width="4" height="3" fill="#666" stroke="#444" stroke-width="1" /><path d="M8 0v1M2 6h1M13 6h1M3 1l1 1M13 1l-1 1M1 3l1 1M15 3l-1 1" fill="none" stroke="#aa0" stroke-width="1" /></svg>
<svg class="a" style="left:40px;top:202px" width="13" height="13" viewBox="0 0 16 16"><path d="M6 9V2.5a1.3 1.3 0 0 1 2.6 0V8l1-.5a1.2 1.2 0 0 1 1.8 .6l.4-.2a1.2 1.2 0 0 1 1.7 1V12q0 3.5-3.5 3.5H8.5q-2.5 0-3.5-2.5l-1.5-3a1 1 0 0 1 1.5-1z" fill="#fff" stroke="#333" stroke-width="1" /></svg>
<svg class="a" style="left:14px;top:215px" width="13" height="13" viewBox="0 0 16 16"><circle cx="6" cy="6" r="4.6" fill="#8ff" stroke="#222" stroke-width="1.5"/><path d="M9.5 9.5l5 5" fill="none" stroke="#222" stroke-width="2.2" /></svg>
<svg class="a" style="left:28px;top:215px" width="13" height="13" viewBox="0 0 16 16"><circle cx="8" cy="6.5" r="4.5" fill="#ff6" stroke="#553" stroke-width="1"/><rect x="6" y="11" width="4" height="3" fill="#666" stroke="#444" stroke-width="1" /><path d="M8 0v1M2 6h1M13 6h1M3 1l1 1M13 1l-1 1M1 3l1 1M15 3l-1 1" fill="none" stroke="#aa0" stroke-width="1" /></svg>
<svg class="a" style="left:40px;top:215px" width="13" height="13" viewBox="0 0 16 16"><path d="M6 9V2.5a1.3 1.3 0 0 1 2.6 0V8l1-.5a1.2 1.2 0 0 1 1.8 .6l.4-.2a1.2 1.2 0 0 1 1.7 1V12q0 3.5-3.5 3.5H8.5q-2.5 0-3.5-2.5l-1.5-3a1 1 0 0 1 1.5-1z" fill="#fff" stroke="#333" stroke-width="1" /></svg>
<div class="a" style="left:872px;top:57px;width:51px;height:48px;border:4px solid #e8141e"></div>
</body></html>
